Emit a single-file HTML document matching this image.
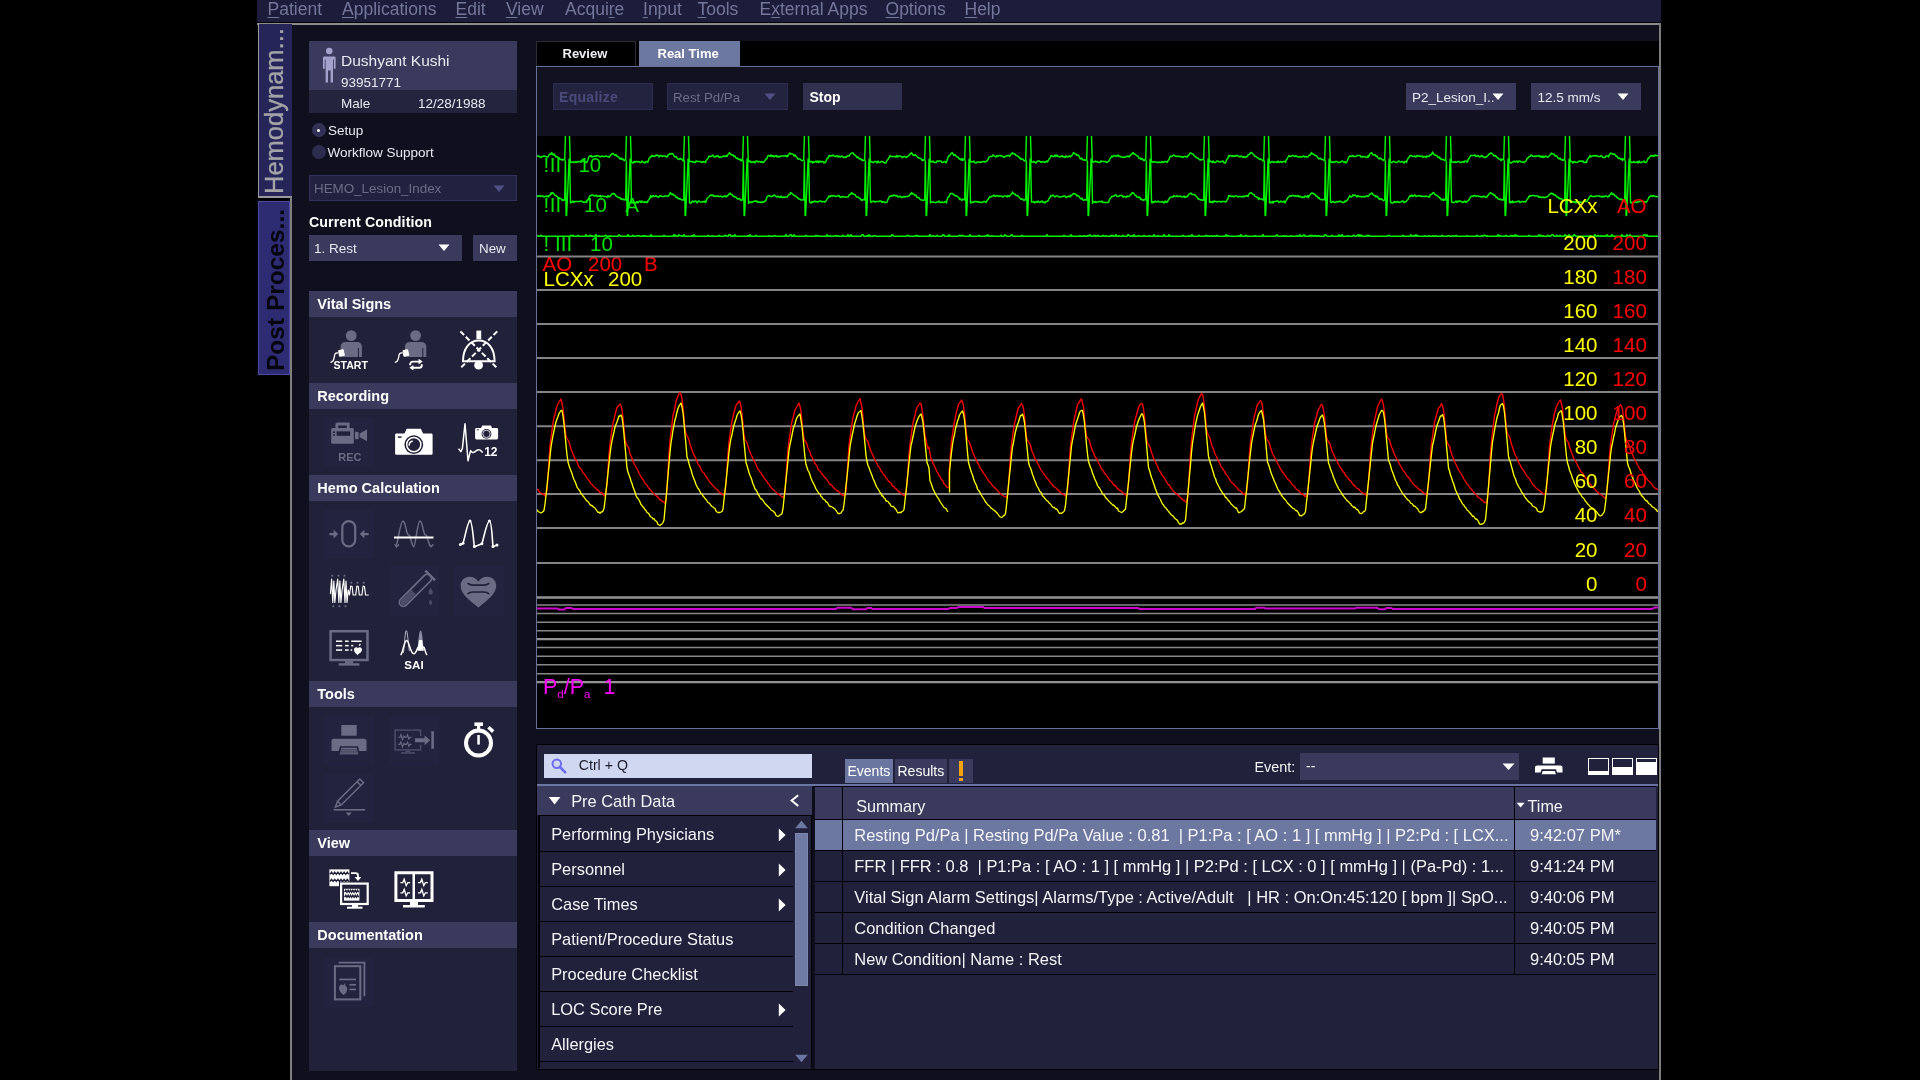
<!DOCTYPE html>
<html lang="en"><head><meta charset="utf-8"><title>Hemodynamic Monitor</title>
<style>
html,body{margin:0;padding:0;background:#000;}
body{width:1920px;height:1080px;overflow:hidden;position:relative;font-family:"Liberation Sans",Arial,sans-serif;}
#app{position:absolute;left:0;top:0;width:1920px;height:1080px;overflow:hidden;background:#000;will-change:transform;}
#app div,#app span,#app svg{position:absolute;display:block;}
#app span{white-space:pre;}
#app span u{text-decoration:underline;text-decoration-thickness:1.2px;text-underline-offset:1.5px;}
.vt{transform-origin:0 0;transform:rotate(-90deg);font-weight:bold;line-height:24px;height:24px;}
svg{overflow:visible;}
svg.wave{overflow:hidden;}

</style></head>
<body>
<div id="app">
<div style="left:257px;top:0px;width:1404px;height:22px;background:#1d1d3b"></div>
<span class="menu" style="left:267.5px;top:0.16px;font-size:17.5px;line-height:19.55px;color:#72779b"><u>P</u>atient</span>
<span class="menu" style="left:342px;top:0.16px;font-size:17.5px;line-height:19.55px;color:#72779b"><u>A</u>pplications</span>
<span class="menu" style="left:455.5px;top:0.16px;font-size:17.5px;line-height:19.55px;color:#72779b"><u>E</u>dit</span>
<span class="menu" style="left:506px;top:0.16px;font-size:17.5px;line-height:19.55px;color:#72779b"><u>V</u>iew</span>
<span class="menu" style="left:565px;top:0.16px;font-size:17.5px;line-height:19.55px;color:#72779b">Acqui<u>r</u>e</span>
<span class="menu" style="left:643px;top:0.16px;font-size:17.5px;line-height:19.55px;color:#72779b"><u>I</u>nput</span>
<span class="menu" style="left:697.5px;top:0.16px;font-size:17.5px;line-height:19.55px;color:#72779b"><u>T</u>ools</span>
<span class="menu" style="left:759.5px;top:0.16px;font-size:17.5px;line-height:19.55px;color:#72779b">E<u>x</u>ternal Apps</span>
<span class="menu" style="left:885.5px;top:0.16px;font-size:17.5px;line-height:19.55px;color:#72779b"><u>O</u>ptions</span>
<span class="menu" style="left:964.5px;top:0.16px;font-size:17.5px;line-height:19.55px;color:#72779b"><u>H</u>elp</span>
<div style="left:257px;top:23px;width:1404px;height:2px;background:#8c8c8c"></div>
<div style="left:1659px;top:23px;width:2px;height:1057px;background:#7c7c7c"></div>
<div style="left:292px;top:25px;width:1367px;height:1055px;background:#0f0f1e"></div>
<div style="left:258px;top:24px;width:34px;height:174px;background:#25255a;border-left:1.5px solid #9a9a9a;border-bottom:2px solid #9a9a9a;box-sizing:border-box"></div>
<span class="vt" style="left:262.4px;top:194.3px;font-size:25.5px;font-weight:normal;-webkit-text-stroke:.35px #a4a4a8;color:#a4a4a8">Hemodynam...</span>
<div style="left:258px;top:201px;width:32px;height:174px;background:#2d2b72;border:1px solid #4a48a0;box-sizing:border-box"></div>
<span class="vt" style="left:263.6px;top:370.5px;font-size:24.5px;color:#05050c">Post Proces...</span>
<div style="left:290px;top:197px;width:2px;height:883px;background:#808080"></div>
<div style="left:308.5px;top:40.7px;width:208.5px;height:49.3px;background:#3a3a5c"></div>
<div style="left:308.5px;top:90px;width:208.5px;height:23px;background:#24243e"></div>
<svg style="left:321px;top:46px" width="18" height="40" viewBox="0 0 18 40"><circle cx="8.3" cy="5" r="3.3" fill="#a2a2cc"/><path d="M3.2 10.6h10.2a1.2 1.2 0 0 1 1.2 1.2v11h-1.8v-9.4h-.8V36.5h-2.4V24.5H7V36.5H4.6V13.4h-.8v9.4H2v-11a1.2 1.2 0 0 1 1.2-1.2z" fill="#a2a2cc"/></svg>
<span style="left:341px;top:51.97px;font-size:15.5px;line-height:17.31px;color:#e8e8f0">Dushyant Kushi</span>
<span style="left:341px;top:74.58px;font-size:13.5px;line-height:15.08px;color:#e8e8f0">93951771</span>
<span style="left:341px;top:96.48px;font-size:13.5px;line-height:15.08px;color:#e8e8f0">Male</span>
<span style="left:418px;top:96.48px;font-size:13.5px;line-height:15.08px;color:#e8e8f0">12/28/1988</span>
<div style="left:311.5px;top:123px;width:14px;height:14px;border-radius:50%;background:#323256"></div>
<div style="left:317px;top:128.5px;width:3px;height:3px;border-radius:50%;background:#fff"></div>
<span style="left:328px;top:122.78px;font-size:13.5px;line-height:15.08px;color:#e8e8f0">Setup</span>
<div style="left:311.5px;top:145px;width:14px;height:14px;border-radius:50%;background:#2c2c4e"></div>
<span style="left:327.5px;top:144.78px;font-size:13.5px;line-height:15.08px;color:#e8e8f0">Workflow Support</span>
<div style="left:308.5px;top:174.5px;width:208.5px;height:26px;background:#222240;border:1px solid #30305a;box-sizing:border-box"></div>
<span style="left:314px;top:179px;font-size:13.4px;line-height:19px;color:#6c6c86">HEMO_Lesion_Index</span>
<svg style="left:493px;top:184.5px" width="12" height="8"><path d="M0.5 0.5h11l-5.5 6.5z" fill="#505084"/></svg>
<span style="left:309px;top:212px;font-size:14.2px;line-height:20px;color:#fff;font-weight:bold;letter-spacing:.1px">Current Condition</span>
<div style="left:308.5px;top:235px;width:153.5px;height:26px;background:#3a3a5c"></div>
<span style="left:314px;top:239px;font-size:13.5px;line-height:19px;color:#e8e8f0">1. Rest</span>
<svg style="left:438px;top:244px" width="12" height="8"><path d="M0.5 0.5h11l-5.5 6.5z" fill="#fff"/></svg>
<div style="left:473px;top:235px;width:44px;height:26px;background:#3a3a5c"></div>
<span style="left:479px;top:239px;font-size:13.4px;line-height:19px;color:#e8e8f0">New</span>
<div style="left:308.5px;top:291px;width:208.5px;height:26px;background:#3a3a5c"></div>
<div style="left:308.5px;top:317px;width:208.5px;height:66px;background:#212139"></div>
<span style="left:317.3px;top:295.88px;font-size:14.5px;line-height:16.20px;color:#fff;font-weight:bold">Vital Signs</span>
<div style="left:308.5px;top:383px;width:208.5px;height:26px;background:#3a3a5c"></div>
<div style="left:308.5px;top:409px;width:208.5px;height:66px;background:#212139"></div>
<span style="left:317.3px;top:387.88px;font-size:14.5px;line-height:16.20px;color:#fff;font-weight:bold">Recording</span>
<div style="left:308.5px;top:475px;width:208.5px;height:26px;background:#3a3a5c"></div>
<div style="left:308.5px;top:501px;width:208.5px;height:180px;background:#212139"></div>
<span style="left:317.3px;top:479.88px;font-size:14.5px;line-height:16.20px;color:#fff;font-weight:bold">Hemo Calculation</span>
<div style="left:308.5px;top:681px;width:208.5px;height:26px;background:#3a3a5c"></div>
<div style="left:308.5px;top:707px;width:208.5px;height:123px;background:#212139"></div>
<span style="left:317.3px;top:685.88px;font-size:14.5px;line-height:16.20px;color:#fff;font-weight:bold">Tools</span>
<div style="left:308.5px;top:830px;width:208.5px;height:26px;background:#3a3a5c"></div>
<div style="left:308.5px;top:856px;width:208.5px;height:66px;background:#212139"></div>
<span style="left:317.3px;top:834.88px;font-size:14.5px;line-height:16.20px;color:#fff;font-weight:bold">View</span>
<div style="left:308.5px;top:922px;width:208.5px;height:26px;background:#3a3a5c"></div>
<div style="left:308.5px;top:948px;width:208.5px;height:123px;background:#212139"></div>
<span style="left:317.3px;top:926.88px;font-size:14.5px;line-height:16.20px;color:#fff;font-weight:bold">Documentation</span>
<svg style="left:324px;top:325px" width="50" height="50" viewBox="0 0 50 50"><circle cx="27.2" cy="10.6" r="5.4" fill="#6b6b83"/><path d="M16.6 32V21.5a4.6 4.6 0 0 1 4.6-4.6h12.1a4.6 4.6 0 0 1 4.6 4.6V32h-3v-9h-1v9z" fill="#6b6b83"/><path d="M14.6 25.6l4.6-.9 1.2 5.6-4.9 1z" fill="#ffffff" stroke="#ffffff" stroke-width="1" stroke-linejoin="round"/><path d="M14.2 28c-3.4-.6-3.6 1.6-4 4.4-.4 2.6-1.6 4.8-3.8 5" fill="none" stroke="#ffffff" stroke-width="1.3"/><text x="9.4" y="43.8" font-family="Liberation Sans, Arial, sans-serif" font-weight="bold" font-size="10.6" fill="#ffffff">START</text></svg>
<svg style="left:389px;top:325px" width="50" height="50" viewBox="0 0 50 50"><circle cx="26.6" cy="10.6" r="5.4" fill="#6b6b83"/><path d="M16 32V21.5a4.6 4.6 0 0 1 4.6-4.6h12.1a4.6 4.6 0 0 1 4.6 4.6V32h-3v-9h-1v9z" fill="#6b6b83"/><path d="M14 25.6l4.6-.9 1.2 5.6-4.9 1z" fill="#ffffff" stroke="#ffffff" stroke-width="1" stroke-linejoin="round"/><path d="M13.6 28c-3.4-.6-3.6 1.6-4 4.4-.4 2.6-1.6 4.8-3.8 5" fill="none" stroke="#ffffff" stroke-width="1.3"/><g fill="none" stroke="#ffffff" stroke-width="1.9"><path d="M21.2 40.2v-1a2.6 2.6 0 0 1 2.6-2.6h6.4"/><path d="M32.8 39.2v1a2.6 2.6 0 0 1-2.6 2.6h-6.4"/></g><path d="M29.6 33.8l4 2.8-4 2.8zM24.4 40l-4 2.8 4 2.8z" fill="#ffffff"/></svg>
<svg style="left:454px;top:325px" width="50" height="50" viewBox="0 0 50 50"><rect x="22.4" y="5.6" width="4.8" height="8.6" fill="#ffffff"/><path d="M9 36.2C9 23 16 15.4 24.8 15.4S40.6 23 40.6 36.2z" fill="none" stroke="#ffffff" stroke-width="2"/><circle cx="24.6" cy="40.2" r="4.4" fill="#ffffff"/><g stroke="#ffffff" stroke-width="2" stroke-dasharray="5.2 2.4"><path d="M6.4 6.4L43 43"/><path d="M43.2 6.4L6.6 43"/></g></svg>
<div style="left:324px;top:417px;width:50px;height:50px;background:#232340"></div>
<svg style="left:324px;top:417px" width="50" height="50" viewBox="0 0 50 50"><path d="M11.4 11V7.6a2 2 0 0 1 2-2h12.2v5.6h-2.8V8.4h-8.6V11z" fill="#6b6b83"/><rect x="7.2" y="11" width="22.6" height="15.8" rx="1.4" fill="#6b6b83"/><rect x="12.6" y="14.4" width="13.6" height="4.4" fill="#212139"/><rect x="9" y="14.4" width="2" height="1.6" fill="#212139"/><rect x="9" y="17.2" width="2" height="1.6" fill="#212139"/><rect x="31" y="14.8" width="3.6" height="7.4" fill="#6b6b83"/><path d="M35.6 16.6l7.4-4.2v11.8l-7.4-4.2z" fill="#6b6b83"/><text x="14.3" y="44" font-family="Liberation Sans, Arial, sans-serif" font-weight="bold" font-size="11" fill="#6b6b83">REC</text></svg>
<svg style="left:389px;top:417px" width="50" height="50" viewBox="0 0 50 50"><path d="M7.4 16.5h8.1l2.2 -4.8h14.2l2.2 4.8h8.1a1.4 1.4 0 0 1 1.4 1.4v18.5a1.4 1.4 0 0 1-1.4 1.4h-34.7a1.4 1.4 0 0 1-1.4-1.4v-18.5a1.4 1.4 0 0 1 1.4-1.4z" fill="#ffffff"/><circle cx="24.8" cy="27.6" r="9.4" fill="#212139"/><circle cx="24.8" cy="27.6" r="7.1" fill="none" stroke="#ffffff" stroke-width="1.5"/><path d="M20.1 28.7a4.7 4.7 0 0 1 3.6 -4.7" fill="none" stroke="#ffffff" stroke-width="1.4"/><rect x="8.8" y="19.3" width="3.8" height="1.5" fill="#212139"/></svg>
<svg style="left:454px;top:417px" width="50" height="50" viewBox="0 0 50 50"><path d="M4.6 31.6l2.2 3 1.6-3.2L11 6.8l3 37 2.6-10.2c1.2 2 2.6 2.6 4.4 1 1.6-1.4 3.2-2.8 5.2-1.4 1 .7 1.6 1.4 2.4 2.4" fill="none" stroke="#ffffff" stroke-width="1.5" stroke-linejoin="round"/><path d="M22.4 11.0h4.7l1.1 -2.4h8.7l1.1 2.4h4.7a1.4 1.4 0 0 1 1.4 1.4v8.6a1.4 1.4 0 0 1-1.4 1.4h-20.2a1.4 1.4 0 0 1-1.4-1.4v-8.6a1.4 1.4 0 0 1 1.4-1.4z" fill="#ffffff"/><circle cx="32.5" cy="16.9" r="4.9" fill="#212139"/><circle cx="32.5" cy="16.9" r="3.7" fill="none" stroke="#ffffff" stroke-width="0.8"/><rect x="22.7" y="12.5" width="2.3" height="0.8" fill="#212139"/><text x="30.2" y="38.6" font-family="Liberation Sans, Arial, sans-serif" font-weight="bold" font-size="12" fill="#ffffff">12</text></svg>
<div style="left:324px;top:509px;width:50px;height:50px;background:#232340"></div>
<svg style="left:324px;top:509px" width="50" height="50" viewBox="0 0 50 50"><rect x="18.3" y="12.1" width="12.9" height="25.3" rx="6.45" fill="none" stroke="#6b6b83" stroke-width="2.2"/><path d="M5.4 23.9h4.2v-3.2l4.6 4.4-4.6 4.4v-3.2H5.4z" fill="#6b6b83"/><path d="M44.6 23.9h-4.2v-3.2l-4.6 4.4 4.6 4.4v-3.2h4.2z" fill="#6b6b83"/></svg>
<svg style="left:389px;top:509px" width="50" height="50" viewBox="0 0 50 50"><path d="M7.4 36.6C9.4 30 11.4 12 14 12s2.8 11 5 13.6l1.4.6c1.6 3.6 2.8 11.6 4.4 11.6S28.400 12 31 12s2.800 11 5 13.600l1.400.6c1.600 3.600 3 11.400 4.600 11.400" fill="none" stroke="#6b6b83" stroke-width="1.5"/><path d="M5.6 35.4l2 2.600 2.400-2.400M39.800 35.400l2.400 2.400 2-2.600" fill="none" stroke="#6b6b83" stroke-width="1.4"/><rect x="5" y="27.5" width="39.500" height="2" fill="#ffffff"/></svg>
<svg style="left:454px;top:509px" width="50" height="50" viewBox="0 0 50 50"><path d="M6 35.600l3-1.400C11.200 28 13.600 12 16 12s3.200 18 4.400 25.800l7.500-3.100C30 28 33 12 35.400 12s2.800 18 3.600 25.800l4-1.800" fill="none" stroke="#ffffff" stroke-width="1.6" stroke-linejoin="round"/><circle cx="6.4" cy="35.4" r="1.5" fill="#ffffff"/><circle cx="9.0" cy="34.2" r="1.5" fill="#ffffff"/><circle cx="16.0" cy="12.0" r="1.5" fill="#ffffff"/><circle cx="20.4" cy="37.6" r="1.5" fill="#ffffff"/><circle cx="27.9" cy="34.7" r="1.5" fill="#ffffff"/><circle cx="35.4" cy="12.0" r="1.5" fill="#ffffff"/><circle cx="39.0" cy="37.6" r="1.5" fill="#ffffff"/><circle cx="43.0" cy="36.0" r="1.5" fill="#ffffff"/></svg>
<svg style="left:324px;top:566px" width="50" height="50" viewBox="0 0 50 50"><path d="M6.4 28L7.6 13L8.8 36.500L9.8 15L10.8 36.500L12.0 24L13.7 13L14.9 36.500L15.9 15L16.9 36.500L18.1 24L19.8 13L21.0 36.500L22.0 15L23.0 36.500L24.2 24L25.5 29L26.7 20L28.1 20.500L29.1 29L31.7 29L32.9 20L34.3 20.500L35.3 29L37.9 29L39.1 20L40.5 20.500L41.5 29L44.7 29" fill="none" stroke="#ffffff" stroke-width="1.15" stroke-linejoin="round"/><rect x="7.4" y="8.8" width="1.800" height="1.800" fill="#6b6b83"/><rect x="13.5" y="8.8" width="1.800" height="1.800" fill="#6b6b83"/><rect x="19.6" y="8.8" width="1.800" height="1.800" fill="#6b6b83"/><rect x="26.4" y="15.8" width="1.800" height="1.800" fill="#6b6b83"/><rect x="32.6" y="15.8" width="1.800" height="1.800" fill="#6b6b83"/><rect x="38.8" y="15.8" width="1.800" height="1.800" fill="#6b6b83"/><rect x="8.4" y="39.4" width="1.800" height="1.800" fill="#6b6b83"/><rect x="14.5" y="39.4" width="1.800" height="1.800" fill="#6b6b83"/><rect x="20.6" y="39.4" width="1.800" height="1.800" fill="#6b6b83"/></svg>
<div style="left:389px;top:566px;width:50px;height:50px;background:#232340"></div>
<svg style="left:389px;top:566px" width="50" height="50" viewBox="0 0 50 50"><g transform="rotate(45 25 25)"><rect x="21.400" y="2.500" width="8.200" height="42" rx="4.100" fill="none" stroke="#6b6b83" stroke-width="1.700"/><path d="M22.300 26h6.400v14a3.200 3.200 0 0 1-6.400 0z" fill="#4c4c68"/><rect x="18.600" y="1.400" width="13.800" height="2.400" fill="#6b6b83"/></g><path d="M41.600 21.800c1.400 2.200 2.200 3.400 2.200 4.600a2.200 2.200 0 0 1-4.400 0c0-1.200.8-2.400 2.200-4.600z" fill="#4c4c68"/><path d="M41.600 33.600c1 1.600 1.600 2.500 1.600 3.400a1.600 1.600 0 0 1-3.200 0c0-.9.6-1.800 1.600-3.400z" fill="#4c4c68"/></svg>
<div style="left:454px;top:566px;width:50px;height:50px;background:#232340"></div>
<svg style="left:454px;top:566px" width="50" height="50" viewBox="0 0 50 50"><path d="M24.400 41.400C14 33.600 6.600 27.400 6.600 19.800c0-5.200 4-9 9-9 3.600 0 6.800 1.800 8.800 4.800 2-3 5.200-4.800 8.800-4.800 5 0 9 3.800 9 9 0 7.600-7.400 13.800-17.800 21.600z" fill="#6b6b83"/><path d="M13.600 17.200c1.600 1.600 3 2 5.400 2h10.800c2.400 0 3.800-.4 5.400-2M13.600 28c1.600-1.600 3-2 5.400-2h10.800c2.400 0 3.800.4 5.400 2" fill="none" stroke="#212139" stroke-width="1.700"/></svg>
<svg style="left:324px;top:623px" width="50" height="50" viewBox="0 0 50 50"><rect x="6.600" y="8.200" width="36.900" height="28.800" fill="none" stroke="#6b6b83" stroke-width="2.500"/><rect x="21" y="38.200" width="8" height="2.400" fill="#6b6b83"/><rect x="14.700" y="40.200" width="20.700" height="2.400" fill="#6b6b83"/><rect x="12.0" y="17.5" width="6.2" height="1.500" fill="#ffffff"/><rect x="21.0" y="17.5" width="3.6" height="1.500" fill="#ffffff"/><rect x="27.2" y="17.5" width="10.4" height="1.500" fill="#ffffff"/><rect x="12.0" y="21.9" width="6.2" height="1.500" fill="#ffffff"/><rect x="21.0" y="21.9" width="3.6" height="1.500" fill="#ffffff"/><rect x="27.2" y="21.9" width="2.0" height="1.500" fill="#ffffff"/><rect x="12.0" y="26.3" width="6.2" height="1.500" fill="#ffffff"/><rect x="21.0" y="26.3" width="3.6" height="1.500" fill="#ffffff"/><rect x="26.6" y="26.3" width="1.6" height="1.500" fill="#ffffff"/><path d="M34 32.400c-2.200-1.600-4-3.400-4-5.800 0-1.400 1-2.400 2.200-2.400.8 0 1.400.4 1.800 1 .4-.6 1-1 1.800-1 1.200 0 2.200 1 2.200 2.400 0 2-1.600 3.400-4.200 5z" fill="#ffffff"/><path d="M35.200 22.600l1.200-1.800" stroke="#ffffff" stroke-width="1.200"/></svg>
<svg style="left:389px;top:623px" width="50" height="50" viewBox="0 0 50 50"><path d="M14.400 30C15.600 22 16 7.600 17.300 7.600S19 20 20.400 28" fill="none" stroke="#b8b8c8" stroke-width="1"/><path d="M28.200 28C29.400 20 29.800 7.400 31.600 7.400S33.800 20 35 28z" fill="#8a8aa4"/><path d="M28.400 27.500c.8-4.500 1.200-7.500 1.600-10.500h3.200c.4 3 .8 6 1.600 10.500z" fill="#ffffff"/><path d="M11.600 32c2.600-2 3.400-14.600 6-14.600s3.600 13.400 7.200 13.400c2.600 0 3.200-6 4.200-6.400l5.800-.200c1 .6 1.400 5.800 3.200 7.800" fill="none" stroke="#ffffff" stroke-width="1.500"/><text x="15.300" y="45.500" font-family="Liberation Sans, Arial, sans-serif" font-weight="bold" font-size="11.600" fill="#ffffff">SAI</text></svg>
<div style="left:324px;top:716px;width:50px;height:50px;background:#232340"></div>
<svg style="left:324px;top:716px" width="50" height="50" viewBox="0 0 50 50"><rect x="17.3" y="9.0" width="15.4" height="10.7" fill="#6b6b83"/><path d="M7.5 35.0v-10.2a2 2 0 0 1 2-2h31.0a2 2 0 0 1 2 2v10.2z" fill="#6b6b83"/><path d="M16.6 31.0h16.8l2.1 8.6h-21.0z" fill="#6b6b83" stroke="#232340" stroke-width="1.600"/><rect x="15.5" y="33.5" width="19.0" height=".700" fill="#232340"/><rect x="15.5" y="35.6" width="19.0" height=".700" fill="#232340"/><rect x="15.5" y="37.8" width="19.0" height=".700" fill="#232340"/></svg>
<div style="left:389px;top:716px;width:50px;height:50px;background:#232340"></div>
<svg style="left:389px;top:716px" width="50" height="50" viewBox="0 0 50 50"><rect x="6.100" y="14.100" width="25.500" height="19.800" fill="none" stroke="#4c4c68" stroke-width="1.500"/><rect x="16.500" y="34.600" width="4.600" height="1.800" fill="#4c4c68"/><rect x="12" y="36.200" width="14" height="1.500" fill="#4c4c68"/><path d="M9.400 21.200l1.500 0 1-2.600 1.600 5 1.400-3.600 1 1.200 1.600 0 1-2.400 1.400 4.200 1.200-1.800 1.400 0M9.400 28.400l1.500 0 1-2.600 1.600 5 1.400-3.600 1 1.200 1.600 0 1-2.400 1.400 4.200 1.200-1.800 1.400 0" fill="none" stroke="#6b6b83" stroke-width="1.100"/><rect x="24.500" y="20" width="8" height="8.600" fill="#232340"/><path d="M26 22.200h9.600v-3l5.600 5-5.600 5v-3H26z" fill="#6b6b83"/><rect x="42.300" y="15.200" width="2.600" height="17.600" fill="#6b6b83"/></svg>
<svg style="left:454px;top:716px" width="50" height="50" viewBox="0 0 50 50"><circle cx="24.500" cy="27" r="12.500" fill="none" stroke="#ffffff" stroke-width="4"/><rect x="20.400" y="6.400" width="8.600" height="3.600" fill="#ffffff"/><rect x="23" y="9.500" width="3.200" height="4" fill="#ffffff"/><rect x="33.600" y="11.600" width="6.400" height="3.600" transform="rotate(42 36.800 13.400)" fill="#ffffff"/><rect x="23.300" y="19" width="2.500" height="9.600" fill="#ffffff"/></svg>
<div style="left:324px;top:773px;width:50px;height:50px;background:#232340"></div>
<svg style="left:324px;top:773px" width="50" height="50" viewBox="0 0 50 50"><g transform="rotate(45 25 20.500)" fill="none" stroke="#6b6b83" stroke-width="1.500"><path d="M22.400 2.600h5.200v31.500l-2.600 5.600-2.600-5.600z"/><path d="M22.400 6.400h5.200M22.400 34.100h5.200"/></g><rect x="9.700" y="36" width="31.400" height="1.600" fill="#6b6b83"/><path d="M21.800 39.600h6l-3 3.400z" fill="#6b6b83"/></svg>
<svg style="left:324px;top:863px" width="50" height="50" viewBox="0 0 50 50"><rect x="5.4" y="6.4" width="20.0" height="16.8" fill="#ffffff"/><path d="M6.0 11.4l1.57 -2.2l1.57 2.2l1.57 -2.2l1.57 2.2l1.57 -2.2l1.57 2.2l1.57 -2.2l1.57 2.2l1.57 -2.2l1.57 2.2l1.57 -2.2l1.57 2.2" fill="none" stroke="#212139" stroke-width="1.300"/><path d="M6.0 18.5l1.57 -2.2l1.57 2.2l1.57 -2.2l1.57 2.2l1.57 -2.2l1.57 2.2l1.57 -2.2l1.57 2.2l1.57 -2.2l1.57 2.2l1.57 -2.2l1.57 2.2" fill="none" stroke="#212139" stroke-width="1.300"/><path d="M27 10.200h4.600a2.400 2.400 0 0 1 2.400 2.400v2.600" fill="none" stroke="#ffffff" stroke-width="1.800"/><path d="M30.600 14l3.400 4 3.400-4z" fill="#ffffff"/><rect x="15" y="18.500" width="30.800" height="24.600" fill="#212139"/><rect x="17.100" y="20.600" width="26.600" height="20.400" fill="none" stroke="#ffffff" stroke-width="2.200"/><rect x="20.0" y="25.8" width="15.4" height="11.8" fill="#ffffff"/><path d="M20.6 29.3l1.18 -2.2l1.18 2.2l1.18 -2.2l1.18 2.2l1.18 -2.2l1.18 2.2l1.18 -2.2l1.18 2.2l1.18 -2.2l1.18 2.2l1.18 -2.2l1.18 2.2" fill="none" stroke="#212139" stroke-width="1.300"/><path d="M20.6 34.3l1.18 -2.2l1.18 2.2l1.18 -2.2l1.18 2.2l1.18 -2.2l1.18 2.2l1.18 -2.2l1.18 2.2l1.18 -2.2l1.18 2.2l1.18 -2.2l1.18 2.2" fill="none" stroke="#212139" stroke-width="1.300"/><rect x="28" y="42" width="6" height="2.200" fill="#ffffff"/><rect x="23" y="43.700" width="15.500" height="2" fill="#ffffff"/></svg>
<svg style="left:389px;top:863px" width="50" height="50" viewBox="0 0 50 50"><rect x="6.900" y="9.750" width="36.100" height="27.750" fill="none" stroke="#ffffff" stroke-width="3"/><rect x="23.500" y="9.750" width="2.500" height="27.750" fill="#ffffff"/><rect x="21" y="39" width="8" height="3.400" fill="#ffffff"/><rect x="14" y="42" width="21.800" height="2.500" fill="#ffffff"/><path d="M11.400 19.600l2.400 0 1.400-3.400 2 6.400 1.600-3 2.400 0M29 19.600l2.400 0 1.400-3.400 2 6.400 1.600-3 2.400 0M11.400 29.800l2.400 0 1.400-3.400 2 6.400 1.600-3 2.400 0M29 29.800l2.400 0 1.400-3.400 2 6.400 1.600-3 2.400 0" fill="none" stroke="#ffffff" stroke-width="1.300"/></svg>
<div style="left:324px;top:957px;width:50px;height:50px;background:#232340"></div>
<svg style="left:324px;top:957px" width="50" height="50" viewBox="0 0 50 50"><path d="M14.700 5.700h25.700v33.600" fill="none" stroke="#6b6b83" stroke-width="1.800"/><rect x="9.800" y="8.100" width="27.600" height="35.400" fill="#232340"/><rect x="10.900" y="9.200" width="25.400" height="33.200" fill="none" stroke="#6b6b83" stroke-width="2"/><rect x="15.400" y="21.600" width="16.600" height="1.700" fill="#6b6b83"/><rect x="25.400" y="26.900" width="6.600" height="1.700" fill="#6b6b83"/><rect x="25.400" y="31.600" width="6.600" height="1.700" fill="#6b6b83"/><path d="M19.600 38c-2.600-1.800-4.600-4-4.600-7 0-2 1.200-3.600 3-3.600.8 0 1.400.2 1.800.8l1.200-2 .8.600-.8 2c1.400.4 2.200 1.800 2.200 3.400 0 2.600-1.600 4.400-3.600 5.800z" fill="#6b6b83"/></svg>
<div style="left:536px;top:40.5px;width:1123px;height:26px;background:#000"></div>
<div style="left:536px;top:41px;width:100px;height:25.5px;background:#000;border:1px solid #2c2c34;border-bottom:none;box-sizing:border-box"></div>
<span style="left:562.5px;top:46.84px;font-size:13px;line-height:14.52px;color:#f0f0f4;font-weight:bold">Review</span>
<div style="left:639px;top:40.7px;width:100.5px;height:25.8px;background:#6c789f"></div>
<span style="left:657.5px;top:46.84px;font-size:13px;line-height:14.52px;color:#fff;font-weight:bold">Real Time</span>
<div style="left:535.5px;top:66px;width:1123.5px;height:663px;background:#11111f"></div>
<div style="left:553px;top:83px;width:99.5px;height:27px;background:#23233f;border:1px solid #2c2c52;box-sizing:border-box"></div>
<span style="left:559px;top:90.13px;font-size:14px;line-height:15.64px;color:#4a4a7c;font-weight:bold;letter-spacing:.3px">Equalize</span>
<div style="left:667px;top:83px;width:121px;height:27px;background:#23233f;border:1px solid #2c2c52;box-sizing:border-box"></div>
<span style="left:673px;top:90.61px;font-size:13.25px;line-height:14.80px;color:#6c6c8a">Rest Pd/Pa</span>
<svg style="left:764px;top:93px" width="12" height="8"><path d="M0.5 0.5h11l-5.5 6.5z" fill="#505084"/></svg>
<div style="left:803px;top:83px;width:99px;height:27px;background:#30304f"></div>
<span style="left:809.5px;top:90.13px;font-size:14px;line-height:15.64px;color:#fff;font-weight:bold">Stop</span>
<div style="left:1406px;top:83px;width:110px;height:27px;background:#3a3a5c"></div>
<span style="left:1412px;top:89.78px;font-size:13.5px;line-height:15.08px;color:#e8e8f0">P2_Lesion_I..</span>
<svg style="left:1492px;top:93px" width="12" height="8"><path d="M0.5 0.5h11l-5.5 6.5z" fill="#fff"/></svg>
<div style="left:1531px;top:83px;width:110px;height:27px;background:#3a3a5c"></div>
<span style="left:1537.5px;top:89.78px;font-size:13.5px;line-height:15.08px;color:#e8e8f0">12.5 mm/s</span>
<svg style="left:1617px;top:93px" width="12" height="8"><path d="M0.5 0.5h11l-5.5 6.5z" fill="#fff"/></svg>
<svg class="wave" style="left:537px;top:136px" width="1122" height="592" viewBox="537 136 1122 592">
<rect x="537" y="136" width="1122" height="592" fill="#000"/>
<g font-family="Liberation Sans, Arial, sans-serif" font-size="20.5">
<g fill="#00e400">
<text x="543.5" y="172">!</text><text x="549.8" y="172">II</text><text x="578.4" y="172">10</text>
<text x="543.5" y="211.5">!</text><text x="549.8" y="211.5">II</text><text x="584" y="211.5">10</text><text x="625.2" y="211.5">A</text>
<text x="543.5" y="250.5">!</text><text x="555" y="250.5">III</text><text x="590" y="250.5">10</text>
</g>
<g fill="#ff0000"><text x="542.5" y="271.3">AO</text><text x="588" y="271.3">200</text><text x="644" y="271.3">B</text></g>
<g fill="#ffff00"><text x="543.5" y="285.5">LCXx</text><text x="608" y="285.5">200</text></g>
</g>
<g stroke="#848484" stroke-width="2">
<line x1="537" x2="1659" y1="256.4" y2="256.4"/>
<line x1="537" x2="1659" y1="290.1" y2="290.1"/>
<line x1="537" x2="1659" y1="324.0" y2="324.0"/>
<line x1="537" x2="1659" y1="358.1" y2="358.1"/>
<line x1="537" x2="1659" y1="392.1" y2="392.1"/>
<line x1="537" x2="1659" y1="426.3" y2="426.3"/>
<line x1="537" x2="1659" y1="460.2" y2="460.2"/>
<line x1="537" x2="1659" y1="493.9" y2="493.9"/>
<line x1="537" x2="1659" y1="528.0" y2="528.0"/>
<line x1="537" x2="1659" y1="563.0" y2="563.0"/>
</g>
<g stroke="#878787" stroke-width="1.5">
<line x1="537" x2="1659" y1="597.5" y2="597.5" stroke="#939393" stroke-width="2.3"/>
<line x1="537" x2="1659" y1="604.9" y2="604.9"/>
<line x1="537" x2="1659" y1="613.4" y2="613.4"/>
<line x1="537" x2="1659" y1="622.2" y2="622.2"/>
<line x1="537" x2="1659" y1="630.7" y2="630.7"/>
<line x1="537" x2="1659" y1="639.2" y2="639.2" stroke="#939393" stroke-width="2.3"/>
<line x1="537" x2="1659" y1="647.6" y2="647.6"/>
<line x1="537" x2="1659" y1="656.2" y2="656.2"/>
<line x1="537" x2="1659" y1="664.8" y2="664.8"/>
<line x1="537" x2="1659" y1="673.7" y2="673.7"/>
<line x1="537" x2="1659" y1="682.1" y2="682.1" stroke="#939393" stroke-width="2.3"/>
</g>
<g fill="none" stroke="#00f200" stroke-width="1.45" stroke-linejoin="round">
<path d="M537.0 155.5L538.0 156.5L539.0 156.0L540.0 157.0L541.0 157.5L542.0 156.5L543.0 156.5L544.0 156.0L545.0 156.5L546.0 156.5L547.0 157.0L548.0 157.0L548.5 156.0L549.0 155.0L550.0 154.0L551.0 154.5L551.5 152.5L552.0 153.0L553.0 155.0L554.0 154.0L555.0 155.5L556.0 157.0L557.0 156.5L558.0 157.5L559.0 159.0L559.5 158.0L560.0 159.0L561.0 159.5L562.0 160.0L562.5 159.5L563.0 159.5L564.0 160.0L564.7 160.0L565.0 150.0L565.7 127.0L566.0 127.0L567.0 127.0L568.0 127.0L569.0 127.0L569.2 127.0L570.0 152.5L570.3 162.0L571.0 162.5L572.0 162.0L573.0 162.0L573.5 162.5L574.0 162.0L575.0 162.5L576.0 161.5L577.0 162.5L578.0 161.5L579.0 161.5L580.0 162.0L581.0 162.0L582.0 161.5L583.0 161.0L584.0 161.0L585.0 162.5L586.0 162.0L586.5 162.5L587.0 162.0L588.0 159.5L589.0 156.5L589.7 156.0L590.0 156.5L591.0 155.5L592.0 157.0L593.0 156.5L594.0 156.5L595.0 156.0L596.0 156.5L597.0 155.5L598.0 156.0L599.0 156.0L600.0 157.0L601.0 156.5L602.0 156.0L603.0 156.5L604.0 156.5L605.0 156.5L606.0 156.0L607.0 156.5L608.0 156.5L609.0 157.0L609.5 157.0L610.0 156.0L611.0 154.5L612.0 154.0L612.5 153.5L613.0 153.5L614.0 154.5L615.0 155.5L616.0 154.5L617.0 156.5L618.0 156.5L619.0 157.5L620.0 159.0L620.5 159.0L621.0 158.0L622.0 159.5L623.0 159.0L623.5 159.5L624.0 160.5L625.0 160.0L625.7 160.0L626.0 150.0L626.7 127.0L627.0 127.0L628.0 127.0L629.0 127.0L630.0 127.0L630.2 127.0L631.0 152.5L631.3 162.0L632.0 162.5L633.0 163.0L634.0 161.5L634.5 161.5L635.0 162.5L636.0 161.5L637.0 161.5L638.0 162.0L639.0 161.5L640.0 162.5L641.0 162.5L642.0 161.0L643.0 162.0L644.0 162.5L645.0 163.0L646.0 161.5L647.0 161.5L647.5 162.5L648.0 162.0L649.0 158.5L650.0 157.5L650.7 156.5L651.0 157.0L652.0 155.5L653.0 156.0L654.0 156.5L655.0 156.0L656.0 155.5L657.0 155.0L658.0 155.5L659.0 157.0L660.0 155.5L661.0 155.5L662.0 156.5L663.0 156.0L664.0 156.0L665.0 156.0L666.0 156.5L667.0 157.0L667.5 156.5L668.0 155.0L669.0 154.5L670.0 153.5L670.5 154.0L671.0 154.0L672.0 153.5L673.0 154.0L674.0 156.0L675.0 157.0L676.0 156.5L677.0 158.0L678.0 159.0L678.5 159.0L679.0 159.5L680.0 158.5L681.0 159.0L681.5 159.5L682.0 159.0L683.0 161.0L683.7 160.0L684.0 150.0L684.7 127.0L685.0 127.0L686.0 127.0L687.0 127.0L688.0 127.0L688.2 127.0L689.0 152.5L689.3 162.0L690.0 161.5L691.0 161.5L692.0 161.5L692.5 162.0L693.0 161.5L694.0 162.5L695.0 162.5L696.0 161.0L697.0 161.5L698.0 161.5L699.0 161.5L700.0 161.5L701.0 162.0L702.0 162.5L703.0 161.5L704.0 162.0L705.0 162.0L705.5 162.5L706.0 160.5L707.0 159.5L708.0 158.5L708.7 156.5L709.0 156.0L710.0 156.5L711.0 156.5L712.0 156.0L713.0 155.0L714.0 157.0L715.0 157.0L716.0 156.0L717.0 156.5L718.0 155.5L719.0 157.5L720.0 157.0L721.0 157.0L722.0 157.0L723.0 156.0L724.0 156.5L725.0 156.0L726.0 156.5L726.5 155.5L727.0 156.5L728.0 154.5L729.0 153.5L729.5 152.5L730.0 153.5L731.0 154.5L732.0 155.0L733.0 155.0L734.0 156.5L735.0 156.0L736.0 158.0L737.0 158.5L737.5 158.0L738.0 159.0L739.0 159.5L740.0 159.0L740.5 160.5L741.0 159.5L742.0 161.0L742.7 160.0L743.0 150.0L743.7 127.0L744.0 127.0L745.0 127.0L746.0 127.0L747.0 127.0L747.2 127.0L748.0 152.5L748.3 162.0L749.0 161.5L750.0 161.0L751.0 162.5L751.5 162.0L752.0 162.5L753.0 162.0L754.0 161.5L755.0 163.0L756.0 161.0L757.0 161.0L758.0 162.0L759.0 161.5L760.0 161.5L761.0 162.5L762.0 161.5L763.0 162.5L764.0 162.0L764.5 161.5L765.0 160.5L766.0 159.0L767.0 158.5L767.7 156.0L768.0 155.5L769.0 155.5L770.0 156.5L771.0 155.0L772.0 156.5L773.0 155.5L774.0 157.0L775.0 156.0L776.0 155.5L777.0 157.0L778.0 156.0L779.0 157.0L780.0 156.5L781.0 156.0L782.0 156.0L783.0 156.0L784.0 156.0L785.0 156.0L786.0 155.5L787.0 157.0L787.5 155.5L788.0 156.0L789.0 154.0L790.0 153.0L790.5 153.5L791.0 154.0L792.0 154.0L793.0 154.0L794.0 156.0L795.0 155.0L796.0 156.5L797.0 157.5L798.0 159.0L798.5 159.0L799.0 159.0L800.0 159.0L801.0 160.0L801.5 160.5L802.0 160.5L803.0 160.5L803.7 160.0L804.0 150.0L804.7 127.0L805.0 127.0L806.0 127.0L807.0 127.0L808.0 127.0L808.2 127.0L809.0 152.5L809.3 162.0L810.0 162.0L811.0 161.5L812.0 161.5L812.5 163.0L813.0 161.5L814.0 162.5L815.0 162.0L816.0 161.0L817.0 162.5L818.0 161.0L819.0 162.5L820.0 161.0L821.0 162.0L822.0 161.5L823.0 161.5L824.0 163.0L825.0 162.0L825.5 162.5L826.0 161.5L827.0 158.5L828.0 158.0L828.7 157.0L829.0 155.5L830.0 156.0L831.0 155.5L832.0 156.0L833.0 155.0L834.0 156.0L835.0 156.5L836.0 156.5L837.0 155.5L838.0 157.0L839.0 156.0L840.0 157.0L841.0 156.5L842.0 156.0L843.0 157.0L844.0 157.5L845.0 157.0L846.0 157.5L847.0 156.0L848.0 156.0L848.5 156.0L849.0 156.0L850.0 154.5L851.0 153.5L851.5 153.0L852.0 153.0L853.0 153.0L854.0 154.5L855.0 155.0L856.0 156.0L857.0 157.5L858.0 157.0L859.0 158.5L859.5 159.0L860.0 158.5L861.0 159.0L862.0 160.5L862.5 159.5L863.0 160.5L864.0 160.5L864.7 160.0L865.0 150.0L865.7 127.0L866.0 127.0L867.0 127.0L868.0 127.0L869.0 127.0L869.2 127.0L870.0 152.5L870.3 162.0L871.0 161.5L872.0 162.0L873.0 162.5L873.5 162.5L874.0 162.0L875.0 161.5L876.0 161.5L877.0 163.0L878.0 161.0L879.0 162.5L880.0 162.5L881.0 161.5L882.0 161.5L883.0 162.0L884.0 162.5L885.0 163.0L886.0 163.0L886.5 161.5L887.0 160.5L888.0 159.5L889.0 157.5L889.7 156.5L890.0 155.5L891.0 156.5L892.0 156.5L893.0 156.5L894.0 156.5L895.0 156.5L896.0 157.0L897.0 155.5L898.0 157.0L899.0 156.0L900.0 156.0L901.0 156.5L902.0 157.5L903.0 157.0L904.0 156.5L905.0 156.5L906.0 157.5L907.0 157.0L908.0 156.0L908.5 156.0L909.0 155.5L910.0 154.0L911.0 153.5L911.5 152.5L912.0 153.5L913.0 155.0L914.0 155.5L915.0 154.5L916.0 155.5L917.0 156.5L918.0 157.5L919.0 158.0L919.5 158.0L920.0 158.5L921.0 158.5L922.0 160.5L922.5 160.0L923.0 159.5L924.0 160.5L924.7 160.0L925.0 150.0L925.7 127.0L926.0 127.0L927.0 127.0L928.0 127.0L929.0 127.0L929.2 127.0L930.0 152.5L930.3 162.0L931.0 161.5L932.0 162.0L933.0 161.0L933.5 161.5L934.0 162.5L935.0 162.5L936.0 162.5L937.0 161.0L938.0 161.5L939.0 161.0L940.0 161.0L941.0 161.0L942.0 162.5L943.0 162.5L944.0 161.5L945.0 161.5L946.0 163.0L946.5 162.0L947.0 160.5L948.0 157.5L948.5 156.0L949.0 156.0L950.0 155.0L951.0 153.5L951.5 153.5L952.0 152.5L953.0 154.0L954.0 155.5L955.0 154.5L956.0 156.0L957.0 157.0L958.0 157.0L959.0 159.0L959.5 158.5L960.0 159.0L961.0 160.0L962.0 158.5L962.5 160.5L963.0 159.0L964.0 160.0L964.7 160.0L965.0 150.0L965.7 127.0L966.0 127.0L967.0 127.0L968.0 127.0L969.0 127.0L969.2 127.0L970.0 152.5L970.3 162.0L971.0 162.0L972.0 161.5L973.0 162.0L973.5 161.5L974.0 161.0L975.0 163.0L976.0 163.0L977.0 162.0L978.0 162.0L979.0 162.0L980.0 162.5L981.0 162.0L982.0 162.0L983.0 161.5L984.0 161.5L985.0 162.0L986.0 161.5L986.5 161.0L987.0 161.0L988.0 159.5L989.0 157.0L989.7 157.0L990.0 156.5L991.0 156.5L992.0 156.5L993.0 155.0L994.0 155.5L995.0 156.5L996.0 157.0L997.0 155.5L998.0 156.5L999.0 155.5L1000.0 155.5L1001.0 156.0L1002.0 156.0L1003.0 156.5L1004.0 157.5L1005.0 156.5L1006.0 156.0L1007.0 156.0L1008.0 155.5L1009.0 155.5L1009.5 156.5L1010.0 156.0L1011.0 154.0L1012.0 153.5L1012.5 152.5L1013.0 153.5L1014.0 154.0L1015.0 154.0L1016.0 155.5L1017.0 155.5L1018.0 156.5L1019.0 157.0L1020.0 158.5L1020.5 158.0L1021.0 159.5L1022.0 159.0L1023.0 159.0L1023.5 160.0L1024.0 160.5L1025.0 161.0L1025.7 160.0L1026.0 150.0L1026.7 127.0L1027.0 127.0L1028.0 127.0L1029.0 127.0L1030.0 127.0L1030.2 127.0L1031.0 152.5L1031.3 162.0L1032.0 162.0L1033.0 162.0L1034.0 161.5L1034.5 161.5L1035.0 162.5L1036.0 163.0L1037.0 161.5L1038.0 161.0L1039.0 161.0L1040.0 161.5L1041.0 162.5L1042.0 161.5L1043.0 162.0L1044.0 162.0L1045.0 162.5L1046.0 161.5L1047.0 161.0L1047.5 162.0L1048.0 161.0L1049.0 159.0L1050.0 158.0L1050.7 156.5L1051.0 155.5L1052.0 156.0L1053.0 156.5L1054.0 156.5L1055.0 155.0L1056.0 156.5L1057.0 155.0L1058.0 156.5L1059.0 156.5L1060.0 157.0L1061.0 156.5L1062.0 155.5L1063.0 157.0L1064.0 156.5L1065.0 157.5L1066.0 156.0L1067.0 156.5L1068.0 157.0L1069.0 156.0L1070.0 156.5L1070.5 157.0L1071.0 156.0L1072.0 155.5L1073.0 153.5L1073.5 152.5L1074.0 153.0L1075.0 154.0L1076.0 154.0L1077.0 155.5L1078.0 155.0L1079.0 156.0L1080.0 158.5L1081.0 159.0L1081.5 158.0L1082.0 158.5L1083.0 160.0L1084.0 160.0L1084.5 159.5L1085.0 160.0L1086.0 160.5L1086.7 160.0L1087.0 150.0L1087.7 127.0L1088.0 127.0L1089.0 127.0L1090.0 127.0L1091.0 127.0L1091.2 127.0L1092.0 152.5L1092.3 162.0L1093.0 162.5L1094.0 161.5L1095.0 161.5L1095.5 161.0L1096.0 162.0L1097.0 161.5L1098.0 162.0L1099.0 162.5L1100.0 162.5L1101.0 161.0L1102.0 161.5L1103.0 161.5L1104.0 161.5L1105.0 161.5L1106.0 162.0L1107.0 162.5L1108.0 161.5L1108.5 161.5L1109.0 161.0L1110.0 158.5L1111.0 157.5L1111.7 156.0L1112.0 157.0L1113.0 156.5L1114.0 155.5L1115.0 155.5L1116.0 156.5L1117.0 156.0L1118.0 155.0L1119.0 156.5L1120.0 156.0L1121.0 157.0L1122.0 157.0L1123.0 157.5L1124.0 157.0L1125.0 157.5L1126.0 156.5L1127.0 156.5L1128.0 156.0L1129.0 157.0L1129.5 156.0L1130.0 156.0L1131.0 154.5L1132.0 154.0L1132.5 153.0L1133.0 152.5L1134.0 154.0L1135.0 154.0L1136.0 155.0L1137.0 156.0L1138.0 156.0L1139.0 158.5L1140.0 158.5L1140.5 158.0L1141.0 159.5L1142.0 158.5L1143.0 159.5L1143.5 160.5L1144.0 159.5L1145.0 160.5L1145.7 160.0L1146.0 150.0L1146.7 127.0L1147.0 127.0L1148.0 127.0L1149.0 127.0L1150.0 127.0L1150.2 127.0L1151.0 152.5L1151.3 162.0L1152.0 161.5L1153.0 162.5L1154.0 161.5L1154.5 162.0L1155.0 162.0L1156.0 162.0L1157.0 162.5L1158.0 162.5L1159.0 162.0L1160.0 162.5L1161.0 162.5L1162.0 161.5L1163.0 162.5L1164.0 162.0L1165.0 161.5L1166.0 161.5L1167.0 162.5L1167.5 162.0L1168.0 160.5L1169.0 159.5L1170.0 156.5L1170.7 156.0L1171.0 156.5L1172.0 156.5L1173.0 155.5L1174.0 155.0L1175.0 156.0L1176.0 156.5L1177.0 156.5L1178.0 156.0L1179.0 156.5L1180.0 156.5L1181.0 157.0L1182.0 156.5L1183.0 157.5L1184.0 156.5L1185.0 156.5L1186.0 156.5L1187.0 157.0L1187.5 157.0L1188.0 155.5L1189.0 155.0L1190.0 153.0L1190.5 153.0L1191.0 153.0L1192.0 154.0L1193.0 154.0L1194.0 155.5L1195.0 156.5L1196.0 157.0L1197.0 158.0L1198.0 158.0L1198.5 159.0L1199.0 159.0L1200.0 160.0L1201.0 159.5L1201.5 160.0L1202.0 159.5L1203.0 159.5L1203.7 160.0L1204.0 150.0L1204.7 127.0L1205.0 127.0L1206.0 127.0L1207.0 127.0L1208.0 127.0L1208.2 127.0L1209.0 152.5L1209.3 162.0L1210.0 161.0L1211.0 161.5L1212.0 162.0L1212.5 162.5L1213.0 161.0L1214.0 162.5L1215.0 162.5L1216.0 162.0L1217.0 161.0L1218.0 161.0L1219.0 162.0L1220.0 162.0L1221.0 161.5L1222.0 161.5L1223.0 161.0L1224.0 163.0L1225.0 162.5L1225.5 163.0L1226.0 161.5L1227.0 159.0L1228.0 158.0L1228.7 155.5L1229.0 156.5L1230.0 155.5L1231.0 155.5L1232.0 156.5L1233.0 155.5L1234.0 156.5L1235.0 156.0L1236.0 155.5L1237.0 156.0L1238.0 155.5L1239.0 156.5L1240.0 157.0L1241.0 156.0L1242.0 156.5L1243.0 157.5L1244.0 156.5L1245.0 157.5L1246.0 157.0L1247.0 156.5L1247.5 156.5L1248.0 155.0L1249.0 154.5L1250.0 154.0L1250.5 152.5L1251.0 152.5L1252.0 153.0L1253.0 154.0L1254.0 155.0L1255.0 156.5L1256.0 156.5L1257.0 157.5L1258.0 158.0L1258.5 158.0L1259.0 159.0L1260.0 159.5L1261.0 159.0L1261.5 159.5L1262.0 160.0L1263.0 161.0L1263.7 160.0L1264.0 150.0L1264.7 127.0L1265.0 127.0L1266.0 127.0L1267.0 127.0L1268.0 127.0L1268.2 127.0L1269.0 152.5L1269.3 162.0L1270.0 163.0L1271.0 162.0L1272.0 161.5L1272.5 161.5L1273.0 162.0L1274.0 162.5L1275.0 162.0L1276.0 162.0L1277.0 162.5L1278.0 161.0L1279.0 162.5L1280.0 162.0L1281.0 161.5L1282.0 162.5L1283.0 161.5L1284.0 161.5L1285.0 161.5L1285.5 162.5L1286.0 160.5L1287.0 159.0L1288.0 157.0L1288.7 156.5L1289.0 155.5L1290.0 156.5L1291.0 156.5L1292.0 155.5L1293.0 155.5L1294.0 156.0L1295.0 156.5L1296.0 155.5L1297.0 156.5L1298.0 157.0L1299.0 157.0L1300.0 156.5L1301.0 157.0L1302.0 157.0L1303.0 156.0L1304.0 156.5L1305.0 157.0L1306.0 156.5L1307.0 157.0L1308.0 157.0L1308.5 156.0L1309.0 155.5L1310.0 155.0L1311.0 153.5L1311.5 152.5L1312.0 154.0L1313.0 154.0L1314.0 154.5L1315.0 155.5L1316.0 155.5L1317.0 156.5L1318.0 158.0L1319.0 159.0L1319.5 158.5L1320.0 158.0L1321.0 159.0L1322.0 159.5L1322.5 159.5L1323.0 159.5L1324.0 160.5L1324.7 160.0L1325.0 150.0L1325.7 127.0L1326.0 127.0L1327.0 127.0L1328.0 127.0L1329.0 127.0L1329.2 127.0L1330.0 152.5L1330.3 162.0L1331.0 161.5L1332.0 162.5L1333.0 162.0L1333.5 162.0L1334.0 162.5L1335.0 162.0L1336.0 161.5L1337.0 161.5L1338.0 162.5L1339.0 162.5L1340.0 162.0L1341.0 162.0L1342.0 161.0L1343.0 161.5L1344.0 162.5L1345.0 161.5L1346.0 163.0L1346.5 162.5L1347.0 161.5L1348.0 159.0L1349.0 156.5L1349.7 156.0L1350.0 156.5L1351.0 156.0L1352.0 156.5L1353.0 155.5L1354.0 156.5L1355.0 156.5L1356.0 156.5L1357.0 155.5L1358.0 155.5L1359.0 155.5L1360.0 155.5L1361.0 157.0L1362.0 156.5L1363.0 157.0L1364.0 156.5L1365.0 156.5L1366.0 157.5L1367.0 157.5L1368.0 155.5L1368.5 157.0L1369.0 156.0L1370.0 153.5L1371.0 153.5L1371.5 152.5L1372.0 153.0L1373.0 155.0L1374.0 155.0L1375.0 154.5L1376.0 156.5L1377.0 156.0L1378.0 158.0L1379.0 158.5L1379.5 159.0L1380.0 158.0L1381.0 158.5L1382.0 159.5L1382.5 159.5L1383.0 160.5L1384.0 159.5L1384.7 160.0L1385.0 150.0L1385.7 127.0L1386.0 127.0L1387.0 127.0L1388.0 127.0L1389.0 127.0L1389.2 127.0L1390.0 152.5L1390.3 162.0L1391.0 162.5L1392.0 162.5L1393.0 161.5L1393.5 161.5L1394.0 161.5L1395.0 162.0L1396.0 162.5L1397.0 162.5L1398.0 161.5L1399.0 161.0L1400.0 162.0L1401.0 162.0L1402.0 161.5L1403.0 162.0L1404.0 163.0L1405.0 161.5L1406.0 161.5L1406.5 162.5L1407.0 160.5L1408.0 158.5L1409.0 157.0L1409.7 156.5L1410.0 155.5L1411.0 155.5L1412.0 156.0L1413.0 156.5L1414.0 156.5L1415.0 156.0L1416.0 157.0L1417.0 155.5L1418.0 156.0L1419.0 156.0L1420.0 156.5L1421.0 156.0L1422.0 156.0L1423.0 157.5L1424.0 156.5L1425.0 156.5L1426.0 157.5L1427.0 156.0L1428.0 156.5L1429.0 156.5L1429.5 155.5L1430.0 155.0L1431.0 155.0L1432.0 153.5L1432.5 152.0L1433.0 153.0L1434.0 154.5L1435.0 155.0L1436.0 155.5L1437.0 155.5L1438.0 157.5L1439.0 157.0L1440.0 158.5L1440.5 158.0L1441.0 159.5L1442.0 159.5L1443.0 159.5L1443.5 159.5L1444.0 160.0L1445.0 160.5L1445.7 160.0L1446.0 150.0L1446.7 127.0L1447.0 127.0L1448.0 127.0L1449.0 127.0L1450.0 127.0L1450.2 127.0L1451.0 152.5L1451.3 162.0L1452.0 162.0L1453.0 162.0L1454.0 162.5L1454.5 162.5L1455.0 161.5L1456.0 162.5L1457.0 162.0L1458.0 161.5L1459.0 161.5L1460.0 162.5L1461.0 162.5L1462.0 162.0L1463.0 161.5L1464.0 162.5L1465.0 161.0L1466.0 161.0L1467.0 162.0L1467.5 162.0L1468.0 160.0L1469.0 158.5L1470.0 156.5L1470.7 155.5L1471.0 155.5L1472.0 155.5L1473.0 155.5L1474.0 155.5L1475.0 155.0L1476.0 156.5L1477.0 156.0L1478.0 155.5L1479.0 156.5L1480.0 157.0L1481.0 156.0L1482.0 155.5L1483.0 157.0L1484.0 157.0L1485.0 157.5L1486.0 157.0L1487.0 156.5L1487.5 156.0L1488.0 155.5L1489.0 154.0L1490.0 154.0L1490.5 153.0L1491.0 153.0L1492.0 153.5L1493.0 154.5L1494.0 156.0L1495.0 155.5L1496.0 156.0L1497.0 157.5L1498.0 158.0L1498.5 159.0L1499.0 159.0L1500.0 159.0L1501.0 160.5L1501.5 160.5L1502.0 159.0L1503.0 159.5L1503.7 160.0L1504.0 150.0L1504.7 127.0L1505.0 127.0L1506.0 127.0L1507.0 127.0L1508.0 127.0L1508.2 127.0L1509.0 152.5L1509.3 162.0L1510.0 162.5L1511.0 163.0L1512.0 162.5L1512.5 162.0L1513.0 162.0L1514.0 161.0L1515.0 162.0L1516.0 161.5L1517.0 161.0L1518.0 162.5L1519.0 161.0L1520.0 161.0L1521.0 162.0L1522.0 162.0L1523.0 162.0L1524.0 162.5L1525.0 161.5L1525.5 161.5L1526.0 161.0L1527.0 158.5L1528.0 158.0L1528.7 157.0L1529.0 156.5L1530.0 156.5L1531.0 155.0L1532.0 155.5L1533.0 156.5L1534.0 156.5L1535.0 156.0L1536.0 156.5L1537.0 156.0L1538.0 156.0L1539.0 155.5L1540.0 157.0L1541.0 156.0L1542.0 157.5L1543.0 156.0L1544.0 157.5L1545.0 156.5L1546.0 156.0L1547.0 157.0L1548.0 157.0L1548.5 157.0L1549.0 156.0L1550.0 155.0L1551.0 154.0L1551.5 153.0L1552.0 154.0L1553.0 154.0L1554.0 154.0L1555.0 156.0L1556.0 155.5L1557.0 156.5L1558.0 158.0L1559.0 159.0L1559.5 158.5L1560.0 158.0L1561.0 159.5L1562.0 160.0L1562.5 160.0L1563.0 159.5L1564.0 160.5L1564.7 160.0L1565.0 150.0L1565.7 127.0L1566.0 127.0L1567.0 127.0L1568.0 127.0L1569.0 127.0L1569.2 127.0L1570.0 152.5L1570.3 162.0L1571.0 161.5L1572.0 161.5L1573.0 163.0L1573.5 162.5L1574.0 161.5L1575.0 162.0L1576.0 162.5L1577.0 162.5L1578.0 162.0L1579.0 161.0L1580.0 161.5L1581.0 161.0L1582.0 161.5L1583.0 161.0L1584.0 162.5L1585.0 162.5L1586.0 162.0L1586.5 162.5L1587.0 160.5L1588.0 158.5L1589.0 157.5L1589.7 156.5L1590.0 155.5L1591.0 157.0L1592.0 156.0L1593.0 156.0L1594.0 155.5L1595.0 156.0L1596.0 155.5L1597.0 156.0L1598.0 156.5L1599.0 156.5L1600.0 156.5L1601.0 155.5L1602.0 156.5L1603.0 157.5L1604.0 157.5L1605.0 157.5L1606.0 156.0L1607.0 156.0L1608.0 156.0L1608.5 157.0L1609.0 155.5L1610.0 154.0L1611.0 153.0L1611.5 153.5L1612.0 153.5L1613.0 154.5L1614.0 154.0L1615.0 154.5L1616.0 156.5L1617.0 156.0L1618.0 158.0L1619.0 158.5L1619.5 158.0L1620.0 158.5L1621.0 159.5L1622.0 158.5L1622.5 160.5L1623.0 159.0L1624.0 159.5L1624.7 160.0L1625.0 150.0L1625.7 127.0L1626.0 127.0L1627.0 127.0L1628.0 127.0L1629.0 127.0L1629.2 127.0L1630.0 152.5L1630.3 162.0L1631.0 162.0L1632.0 162.5L1633.0 162.5L1633.5 161.5L1634.0 162.0L1635.0 162.5L1636.0 162.5L1637.0 161.5L1638.0 163.0L1639.0 161.0L1640.0 162.5L1641.0 162.5L1642.0 162.0L1643.0 162.0L1644.0 161.0L1645.0 162.5L1646.0 162.5L1646.5 162.0L1647.0 161.0L1648.0 158.5L1649.0 158.0L1649.7 156.5L1650.0 156.5L1651.0 155.5L1652.0 156.0L1653.0 155.5L1654.0 156.5L1655.0 155.0L1656.0 155.5L1657.0 155.5L1658.0 156.0"/>
<path d="M537.0 197.0L538.0 195.5L539.0 196.5L540.0 195.5L541.0 196.5L542.0 196.0L543.0 196.0L544.0 197.0L545.0 196.5L546.0 196.0L547.0 196.5L548.0 196.0L548.5 197.0L549.0 195.5L550.0 195.5L551.0 193.0L551.5 194.0L552.0 192.5L553.0 193.0L554.0 194.0L555.0 195.5L556.0 195.5L557.0 196.5L558.0 198.0L559.0 197.5L559.5 198.5L560.0 198.5L561.0 198.5L562.0 200.5L562.5 199.5L563.0 199.5L564.0 200.5L564.7 200.0L565.0 183.5L565.4 161.0L566.0 207.5L566.1 215.5L566.6 215.5L567.0 206.5L567.8 189.0L568.0 184.5L569.0 161.5L569.1 159.0L569.7 163.0L570.0 178.0L570.5 203.0L571.0 202.5L572.0 202.0L573.0 201.0L573.5 202.5L574.0 202.0L575.0 201.5L576.0 201.5L577.0 201.5L578.0 201.5L579.0 201.5L580.0 201.5L581.0 201.0L582.0 201.5L583.0 202.0L584.0 202.5L585.0 202.0L586.0 202.0L586.5 202.5L587.0 201.5L588.0 199.5L589.0 197.5L589.7 196.5L590.0 195.5L591.0 195.5L592.0 195.0L593.0 195.0L594.0 196.0L595.0 196.0L596.0 195.0L597.0 196.5L598.0 196.0L599.0 196.5L600.0 195.5L601.0 197.0L602.0 196.0L603.0 196.0L604.0 196.5L605.0 196.5L606.0 196.5L607.0 197.5L608.0 195.5L609.0 197.0L609.5 196.5L610.0 196.5L611.0 195.0L612.0 194.0L612.5 193.5L613.0 194.0L614.0 193.5L615.0 194.5L616.0 196.0L617.0 196.5L618.0 197.5L619.0 197.5L620.0 197.5L620.5 199.0L621.0 198.5L622.0 199.5L623.0 199.0L623.5 199.5L624.0 200.0L625.0 199.5L625.7 200.0L626.0 183.5L626.4 161.0L627.0 207.5L627.1 215.5L627.6 215.5L628.0 206.5L628.8 189.0L629.0 184.5L630.0 161.5L630.1 159.0L630.7 163.0L631.0 178.0L631.5 203.0L632.0 202.0L633.0 203.0L634.0 202.5L634.5 202.5L635.0 202.5L636.0 203.0L637.0 201.5L638.0 203.0L639.0 201.5L640.0 201.0L641.0 202.5L642.0 201.0L643.0 202.0L644.0 202.5L645.0 201.5L646.0 202.5L647.0 202.0L647.5 202.5L648.0 200.5L649.0 199.5L650.0 198.0L650.7 195.5L651.0 197.0L652.0 197.0L653.0 195.5L654.0 196.5L655.0 196.5L656.0 195.5L657.0 196.5L658.0 197.0L659.0 197.0L660.0 195.5L661.0 196.0L662.0 196.5L663.0 196.5L664.0 196.5L665.0 196.0L666.0 196.0L667.0 196.0L667.5 196.5L668.0 196.0L669.0 195.5L670.0 193.0L670.5 192.5L671.0 194.0L672.0 194.5L673.0 194.0L674.0 195.5L675.0 195.5L676.0 197.5L677.0 197.0L678.0 198.5L678.5 198.5L679.0 199.0L680.0 198.5L681.0 199.5L681.5 199.5L682.0 200.0L683.0 200.0L683.7 200.0L684.0 183.5L684.4 161.0L685.0 207.5L685.1 215.5L685.6 215.5L686.0 206.5L686.8 189.0L687.0 184.5L688.0 161.5L688.1 159.0L688.7 163.0L689.0 178.0L689.5 203.0L690.0 203.0L691.0 203.0L692.0 201.5L692.5 201.0L693.0 201.5L694.0 202.0L695.0 201.0L696.0 201.0L697.0 203.0L698.0 201.5L699.0 201.0L700.0 202.0L701.0 202.0L702.0 202.0L703.0 201.5L704.0 202.0L705.0 201.0L705.5 202.5L706.0 202.0L707.0 198.5L708.0 197.5L708.7 197.0L709.0 196.5L710.0 195.5L711.0 195.0L712.0 195.5L713.0 195.0L714.0 196.5L715.0 196.0L716.0 196.0L717.0 196.5L718.0 196.0L719.0 196.5L720.0 196.5L721.0 196.0L722.0 197.0L723.0 197.0L724.0 196.0L725.0 196.5L726.0 196.0L726.5 197.0L727.0 196.0L728.0 195.5L729.0 194.0L729.5 193.5L730.0 193.0L731.0 194.5L732.0 194.5L733.0 196.0L734.0 196.5L735.0 197.0L736.0 197.0L737.0 198.5L737.5 199.0L738.0 199.0L739.0 198.5L740.0 199.0L740.5 200.0L741.0 200.5L742.0 199.5L742.7 200.0L743.0 183.5L743.4 161.0L744.0 207.5L744.1 215.5L744.6 215.5L745.0 206.5L745.8 189.0L746.0 184.5L747.0 161.5L747.1 159.0L747.7 163.0L748.0 178.0L748.5 203.5L749.0 202.5L750.0 202.0L751.0 202.5L751.5 202.0L752.0 202.5L753.0 201.5L754.0 201.5L755.0 201.0L756.0 201.5L757.0 201.0L758.0 202.5L759.0 202.0L760.0 202.0L761.0 202.5L762.0 202.0L763.0 202.5L764.0 201.5L764.5 201.5L765.0 201.5L766.0 200.0L767.0 197.0L767.7 196.0L768.0 196.0L769.0 195.5L770.0 196.0L771.0 196.5L772.0 196.5L773.0 196.0L774.0 195.0L775.0 195.5L776.0 196.5L777.0 197.0L778.0 196.0L779.0 197.0L780.0 197.5L781.0 196.0L782.0 197.5L783.0 197.0L784.0 197.5L785.0 197.0L786.0 197.0L787.0 197.0L787.5 197.0L788.0 195.5L789.0 194.5L790.0 194.5L790.5 192.5L791.0 193.0L792.0 193.5L793.0 194.5L794.0 195.5L795.0 195.5L796.0 196.5L797.0 197.5L798.0 198.0L798.5 199.0L799.0 199.0L800.0 199.0L801.0 200.0L801.5 200.0L802.0 200.0L803.0 199.5L803.7 200.0L804.0 183.5L804.4 161.0L805.0 207.5L805.1 215.5L805.6 215.5L806.0 206.5L806.8 189.0L807.0 184.5L808.0 161.5L808.1 159.0L808.7 163.0L809.0 178.0L809.5 201.5L810.0 202.5L811.0 203.0L812.0 201.5L812.5 202.5L813.0 202.0L814.0 201.5L815.0 201.0L816.0 202.0L817.0 201.5L818.0 202.0L819.0 201.5L820.0 201.0L821.0 201.0L822.0 202.0L823.0 201.5L824.0 201.5L825.0 202.0L825.5 201.5L826.0 201.0L827.0 199.0L828.0 198.0L828.7 196.0L829.0 196.0L830.0 197.0L831.0 195.5L832.0 196.0L833.0 196.0L834.0 195.5L835.0 196.5L836.0 196.5L837.0 196.0L838.0 196.0L839.0 195.5L840.0 197.0L841.0 197.5L842.0 196.5L843.0 196.5L844.0 197.0L845.0 197.0L846.0 197.0L847.0 197.0L848.0 197.0L848.5 196.5L849.0 195.0L850.0 194.5L851.0 194.0L851.5 192.5L852.0 193.0L853.0 194.0L854.0 194.5L855.0 194.5L856.0 196.5L857.0 197.0L858.0 197.0L859.0 198.0L859.5 198.0L860.0 198.5L861.0 200.0L862.0 199.5L862.5 200.5L863.0 199.5L864.0 199.5L864.7 200.0L865.0 183.5L865.4 161.0L866.0 207.5L866.1 215.5L866.6 215.5L867.0 206.5L867.8 189.0L868.0 184.5L869.0 161.5L869.1 159.0L869.7 163.0L870.0 178.0L870.5 201.5L871.0 202.5L872.0 201.5L873.0 201.5L873.5 201.0L874.0 201.5L875.0 202.0L876.0 201.5L877.0 201.5L878.0 201.5L879.0 201.5L880.0 201.0L881.0 201.0L882.0 202.5L883.0 201.5L884.0 202.0L885.0 202.5L886.0 202.5L886.5 202.5L887.0 202.0L888.0 199.5L889.0 197.0L889.7 196.5L890.0 196.0L891.0 196.5L892.0 195.5L893.0 196.0L894.0 195.0L895.0 195.5L896.0 196.0L897.0 195.5L898.0 197.0L899.0 197.0L900.0 196.0L901.0 197.0L902.0 197.5L903.0 197.0L904.0 196.5L905.0 197.0L906.0 196.5L907.0 196.5L908.0 196.5L908.5 196.0L909.0 196.0L910.0 194.5L911.0 193.5L911.5 192.5L912.0 194.0L913.0 193.5L914.0 194.5L915.0 195.5L916.0 195.0L917.0 197.5L918.0 197.5L919.0 197.5L919.5 199.0L920.0 199.0L921.0 200.0L922.0 200.0L922.5 200.0L923.0 200.5L924.0 200.0L924.7 200.0L925.0 183.5L925.4 161.0L926.0 207.5L926.1 215.5L926.6 215.5L927.0 206.5L927.8 189.0L928.0 184.5L929.0 161.5L929.1 159.0L929.7 163.0L930.0 178.0L930.5 203.0L931.0 202.0L932.0 202.0L933.0 202.0L933.5 202.0L934.0 202.5L935.0 202.5L936.0 202.5L937.0 202.0L938.0 202.0L939.0 201.0L940.0 202.5L941.0 202.5L942.0 202.0L943.0 202.5L944.0 202.5L945.0 201.5L946.0 202.0L946.5 203.0L947.0 200.0L948.0 197.0L948.5 197.0L949.0 196.5L950.0 194.0L951.0 193.5L951.5 193.5L952.0 193.5L953.0 194.0L954.0 195.0L955.0 195.5L956.0 196.0L957.0 196.0L958.0 197.0L959.0 198.0L959.5 199.5L960.0 198.5L961.0 199.5L962.0 200.5L962.5 199.0L963.0 199.5L964.0 199.5L964.7 200.0L965.0 183.5L965.4 161.0L966.0 207.5L966.1 215.5L966.6 215.5L967.0 206.5L967.8 189.0L968.0 184.5L969.0 161.5L969.1 159.0L969.7 163.0L970.0 178.0L970.5 203.0L971.0 203.0L972.0 202.0L973.0 202.0L973.5 202.5L974.0 202.0L975.0 201.5L976.0 201.5L977.0 202.0L978.0 201.5L979.0 202.5L980.0 202.0L981.0 202.5L982.0 202.5L983.0 202.0L984.0 201.5L985.0 201.5L986.0 202.5L986.5 202.0L987.0 200.5L988.0 199.5L989.0 198.0L989.7 196.5L990.0 197.0L991.0 197.0L992.0 196.0L993.0 196.0L994.0 195.0L995.0 196.5L996.0 196.0L997.0 195.5L998.0 196.0L999.0 196.5L1000.0 196.0L1001.0 196.0L1002.0 196.5L1003.0 197.0L1004.0 196.0L1005.0 196.0L1006.0 196.0L1007.0 197.0L1008.0 195.5L1009.0 196.5L1009.5 196.5L1010.0 195.5L1011.0 194.5L1012.0 193.5L1012.5 192.0L1013.0 193.0L1014.0 194.0L1015.0 194.0L1016.0 195.5L1017.0 195.5L1018.0 196.0L1019.0 197.0L1020.0 198.0L1020.5 199.0L1021.0 199.5L1022.0 199.0L1023.0 199.0L1023.5 200.0L1024.0 200.5L1025.0 199.5L1025.7 200.0L1026.0 183.5L1026.4 161.0L1027.0 207.5L1027.1 215.5L1027.6 215.5L1028.0 206.5L1028.8 189.0L1029.0 184.5L1030.0 161.5L1030.1 159.0L1030.7 163.0L1031.0 178.0L1031.5 202.0L1032.0 202.0L1033.0 202.0L1034.0 201.5L1034.5 203.0L1035.0 202.5L1036.0 201.5L1037.0 202.5L1038.0 201.0L1039.0 202.0L1040.0 202.5L1041.0 201.5L1042.0 201.0L1043.0 202.5L1044.0 202.0L1045.0 203.0L1046.0 201.5L1047.0 201.5L1047.5 201.0L1048.0 201.0L1049.0 198.5L1050.0 197.5L1050.7 195.5L1051.0 196.0L1052.0 196.0L1053.0 195.0L1054.0 196.0L1055.0 197.0L1056.0 196.0L1057.0 196.0L1058.0 196.0L1059.0 197.0L1060.0 197.0L1061.0 197.0L1062.0 196.5L1063.0 196.5L1064.0 196.0L1065.0 196.0L1066.0 197.5L1067.0 197.0L1068.0 196.5L1069.0 196.0L1070.0 197.0L1070.5 195.5L1071.0 196.0L1072.0 195.0L1073.0 194.0L1073.5 193.5L1074.0 193.5L1075.0 194.0L1076.0 194.5L1077.0 196.0L1078.0 195.5L1079.0 196.5L1080.0 198.0L1081.0 199.0L1081.5 199.0L1082.0 198.0L1083.0 200.0L1084.0 200.5L1084.5 199.5L1085.0 199.5L1086.0 200.0L1086.7 200.0L1087.0 183.5L1087.4 161.0L1088.0 207.5L1088.1 215.5L1088.6 215.5L1089.0 206.5L1089.8 189.0L1090.0 184.5L1091.0 161.5L1091.1 159.0L1091.7 163.0L1092.0 178.0L1092.5 203.5L1093.0 202.0L1094.0 201.5L1095.0 202.5L1095.5 201.5L1096.0 202.5L1097.0 202.0L1098.0 202.0L1099.0 201.5L1100.0 201.5L1101.0 202.0L1102.0 201.0L1103.0 202.5L1104.0 202.5L1105.0 202.5L1106.0 202.5L1107.0 202.5L1108.0 202.5L1108.5 202.5L1109.0 201.0L1110.0 198.5L1111.0 197.5L1111.7 196.5L1112.0 196.5L1113.0 196.5L1114.0 196.0L1115.0 195.0L1116.0 195.0L1117.0 196.5L1118.0 196.5L1119.0 196.0L1120.0 195.5L1121.0 195.5L1122.0 195.5L1123.0 197.0L1124.0 196.5L1125.0 196.5L1126.0 197.5L1127.0 196.0L1128.0 196.5L1129.0 196.5L1129.5 196.0L1130.0 195.0L1131.0 194.5L1132.0 193.0L1132.5 192.5L1133.0 193.0L1134.0 193.5L1135.0 195.5L1136.0 195.5L1137.0 197.0L1138.0 197.5L1139.0 197.0L1140.0 197.5L1140.5 199.5L1141.0 199.0L1142.0 199.5L1143.0 200.5L1143.5 199.5L1144.0 200.0L1145.0 199.5L1145.7 200.0L1146.0 183.5L1146.4 161.0L1147.0 207.5L1147.1 215.5L1147.6 215.5L1148.0 206.5L1148.8 189.0L1149.0 184.5L1150.0 161.5L1150.1 159.0L1150.7 163.0L1151.0 178.0L1151.5 202.0L1152.0 203.0L1153.0 201.5L1154.0 202.5L1154.5 202.0L1155.0 201.0L1156.0 202.0L1157.0 202.0L1158.0 201.0L1159.0 202.0L1160.0 202.0L1161.0 202.0L1162.0 201.5L1163.0 202.0L1164.0 203.0L1165.0 201.0L1166.0 202.5L1167.0 201.5L1167.5 202.0L1168.0 200.5L1169.0 199.0L1170.0 197.5L1170.7 197.0L1171.0 197.0L1172.0 197.0L1173.0 197.0L1174.0 195.5L1175.0 196.5L1176.0 196.5L1177.0 195.5L1178.0 196.5L1179.0 196.5L1180.0 196.0L1181.0 196.5L1182.0 197.0L1183.0 197.0L1184.0 196.0L1185.0 197.5L1186.0 196.5L1187.0 197.0L1187.5 196.0L1188.0 196.0L1189.0 194.0L1190.0 193.5L1190.5 193.5L1191.0 193.0L1192.0 194.5L1193.0 194.5L1194.0 194.5L1195.0 195.0L1196.0 196.0L1197.0 197.0L1198.0 199.0L1198.5 198.5L1199.0 199.5L1200.0 199.5L1201.0 200.0L1201.5 200.0L1202.0 199.5L1203.0 200.5L1203.7 200.0L1204.0 183.5L1204.4 161.0L1205.0 207.5L1205.1 215.5L1205.6 215.5L1206.0 206.5L1206.8 189.0L1207.0 184.5L1208.0 161.5L1208.1 159.0L1208.7 163.0L1209.0 178.0L1209.5 202.0L1210.0 202.5L1211.0 201.5L1212.0 202.5L1212.5 201.5L1213.0 202.5L1214.0 201.0L1215.0 201.5L1216.0 201.5L1217.0 202.0L1218.0 201.5L1219.0 201.5L1220.0 201.5L1221.0 202.0L1222.0 201.5L1223.0 201.5L1224.0 201.5L1225.0 201.5L1225.5 202.0L1226.0 202.0L1227.0 200.0L1228.0 198.5L1228.7 195.5L1229.0 196.5L1230.0 195.5L1231.0 196.5L1232.0 196.5L1233.0 196.0L1234.0 197.0L1235.0 196.0L1236.0 196.0L1237.0 196.0L1238.0 197.0L1239.0 196.5L1240.0 196.5L1241.0 196.5L1242.0 197.0L1243.0 196.0L1244.0 197.0L1245.0 196.0L1246.0 196.0L1247.0 195.5L1247.5 196.5L1248.0 196.5L1249.0 194.0L1250.0 193.0L1250.5 193.0L1251.0 192.5L1252.0 193.5L1253.0 194.5L1254.0 194.5L1255.0 196.5L1256.0 196.5L1257.0 197.5L1258.0 197.5L1258.5 199.5L1259.0 198.0L1260.0 199.0L1261.0 199.0L1261.5 199.0L1262.0 199.0L1263.0 200.0L1263.7 200.0L1264.0 183.5L1264.4 161.0L1265.0 207.5L1265.1 215.5L1265.6 215.5L1266.0 206.5L1266.8 189.0L1267.0 184.5L1268.0 161.5L1268.1 159.0L1268.7 163.0L1269.0 178.0L1269.5 202.5L1270.0 203.0L1271.0 202.0L1272.0 202.5L1272.5 201.5L1273.0 203.0L1274.0 201.5L1275.0 201.5L1276.0 201.5L1277.0 201.0L1278.0 201.0L1279.0 202.5L1280.0 202.0L1281.0 201.0L1282.0 202.0L1283.0 202.0L1284.0 201.0L1285.0 203.0L1285.5 201.5L1286.0 201.0L1287.0 199.0L1288.0 197.5L1288.7 197.0L1289.0 196.5L1290.0 195.5L1291.0 196.5L1292.0 195.5L1293.0 195.5L1294.0 196.0L1295.0 195.5L1296.0 196.5L1297.0 196.0L1298.0 195.5L1299.0 197.0L1300.0 196.0L1301.0 197.0L1302.0 197.5L1303.0 197.0L1304.0 197.5L1305.0 196.0L1306.0 196.5L1307.0 197.0L1308.0 195.5L1308.5 197.5L1309.0 196.0L1310.0 195.0L1311.0 193.5L1311.5 193.0L1312.0 193.0L1313.0 193.5L1314.0 194.0L1315.0 194.5L1316.0 196.0L1317.0 196.0L1318.0 198.0L1319.0 197.5L1319.5 198.5L1320.0 199.5L1321.0 199.5L1322.0 199.5L1322.5 200.0L1323.0 199.5L1324.0 199.5L1324.7 200.0L1325.0 183.5L1325.4 161.0L1326.0 207.5L1326.1 215.5L1326.6 215.5L1327.0 206.5L1327.8 189.0L1328.0 184.5L1329.0 161.5L1329.1 159.0L1329.7 163.0L1330.0 178.0L1330.5 202.0L1331.0 202.5L1332.0 202.0L1333.0 201.5L1333.5 201.5L1334.0 202.5L1335.0 202.5L1336.0 202.0L1337.0 201.5L1338.0 202.0L1339.0 201.5L1340.0 201.0L1341.0 202.0L1342.0 202.0L1343.0 202.5L1344.0 202.5L1345.0 201.0L1346.0 201.5L1346.5 201.0L1347.0 200.5L1348.0 199.0L1349.0 197.0L1349.7 195.5L1350.0 196.5L1351.0 197.0L1352.0 196.5L1353.0 195.0L1354.0 195.5L1355.0 195.0L1356.0 196.0L1357.0 197.0L1358.0 195.5L1359.0 196.5L1360.0 196.5L1361.0 196.5L1362.0 197.0L1363.0 196.5L1364.0 196.5L1365.0 197.0L1366.0 196.0L1367.0 196.0L1368.0 196.5L1368.5 196.0L1369.0 195.5L1370.0 194.0L1371.0 194.0L1371.5 193.0L1372.0 193.0L1373.0 194.5L1374.0 195.5L1375.0 195.5L1376.0 197.0L1377.0 196.0L1378.0 197.5L1379.0 199.0L1379.5 199.5L1380.0 198.5L1381.0 199.5L1382.0 199.0L1382.5 199.5L1383.0 200.5L1384.0 200.5L1384.7 200.0L1385.0 183.5L1385.4 161.0L1386.0 207.5L1386.1 215.5L1386.6 215.5L1387.0 206.5L1387.8 189.0L1388.0 184.5L1389.0 161.5L1389.1 159.0L1389.7 163.0L1390.0 178.0L1390.5 202.0L1391.0 202.5L1392.0 203.0L1393.0 203.0L1393.5 202.5L1394.0 201.5L1395.0 202.0L1396.0 202.5L1397.0 201.5L1398.0 202.0L1399.0 202.5L1400.0 202.0L1401.0 202.0L1402.0 201.0L1403.0 201.0L1404.0 202.5L1405.0 202.0L1406.0 201.5L1406.5 201.0L1407.0 200.5L1408.0 199.5L1409.0 197.0L1409.7 196.5L1410.0 195.5L1411.0 196.5L1412.0 195.0L1413.0 196.5L1414.0 195.5L1415.0 195.0L1416.0 196.5L1417.0 196.0L1418.0 196.0L1419.0 195.5L1420.0 196.0L1421.0 196.5L1422.0 196.0L1423.0 196.5L1424.0 196.5L1425.0 196.5L1426.0 196.0L1427.0 196.5L1428.0 196.5L1429.0 197.0L1429.5 197.0L1430.0 195.0L1431.0 194.5L1432.0 194.0L1432.5 193.5L1433.0 192.5L1434.0 193.0L1435.0 194.5L1436.0 195.0L1437.0 195.5L1438.0 196.5L1439.0 197.0L1440.0 198.5L1440.5 198.0L1441.0 199.5L1442.0 200.0L1443.0 199.0L1443.5 200.5L1444.0 199.0L1445.0 200.0L1445.7 200.0L1446.0 183.5L1446.4 161.0L1447.0 207.5L1447.1 215.5L1447.6 215.5L1448.0 206.5L1448.8 189.0L1449.0 184.5L1450.0 161.5L1450.1 159.0L1450.7 163.0L1451.0 178.0L1451.5 202.0L1452.0 202.0L1453.0 202.5L1454.0 202.5L1454.5 202.5L1455.0 202.0L1456.0 201.0L1457.0 202.5L1458.0 201.0L1459.0 201.5L1460.0 201.0L1461.0 201.5L1462.0 202.0L1463.0 202.5L1464.0 202.0L1465.0 201.0L1466.0 202.5L1467.0 201.5L1467.5 201.5L1468.0 200.5L1469.0 200.0L1470.0 197.5L1470.7 197.0L1471.0 196.5L1472.0 196.0L1473.0 196.5L1474.0 195.5L1475.0 195.5L1476.0 196.5L1477.0 196.0L1478.0 196.0L1479.0 196.5L1480.0 196.5L1481.0 197.0L1482.0 196.5L1483.0 197.0L1484.0 196.0L1485.0 197.0L1486.0 197.5L1487.0 197.0L1487.5 195.5L1488.0 195.5L1489.0 194.0L1490.0 193.0L1490.5 192.5L1491.0 193.0L1492.0 194.0L1493.0 194.0L1494.0 195.5L1495.0 195.0L1496.0 197.5L1497.0 197.0L1498.0 199.0L1498.5 199.0L1499.0 199.5L1500.0 199.0L1501.0 199.5L1501.5 200.0L1502.0 199.5L1503.0 200.0L1503.7 200.0L1504.0 183.5L1504.4 161.0L1505.0 207.5L1505.1 215.5L1505.6 215.5L1506.0 206.5L1506.8 189.0L1507.0 184.5L1508.0 161.5L1508.1 159.0L1508.7 163.0L1509.0 178.0L1509.5 202.0L1510.0 203.0L1511.0 201.5L1512.0 202.5L1512.5 201.0L1513.0 202.5L1514.0 202.0L1515.0 202.0L1516.0 202.0L1517.0 201.5L1518.0 201.5L1519.0 201.0L1520.0 202.5L1521.0 202.0L1522.0 201.5L1523.0 201.5L1524.0 202.0L1525.0 201.5L1525.5 202.0L1526.0 201.5L1527.0 199.5L1528.0 198.5L1528.7 196.5L1529.0 197.0L1530.0 195.5L1531.0 196.0L1532.0 195.5L1533.0 195.5L1534.0 195.5L1535.0 196.0L1536.0 196.0L1537.0 196.0L1538.0 196.0L1539.0 197.5L1540.0 196.5L1541.0 197.5L1542.0 197.5L1543.0 197.0L1544.0 197.5L1545.0 197.5L1546.0 197.0L1547.0 197.0L1548.0 196.0L1548.5 196.0L1549.0 195.0L1550.0 194.0L1551.0 193.5L1551.5 193.0L1552.0 194.0L1553.0 193.5L1554.0 195.0L1555.0 195.0L1556.0 195.5L1557.0 197.0L1558.0 197.0L1559.0 198.5L1559.5 198.0L1560.0 199.0L1561.0 198.5L1562.0 199.0L1562.5 200.0L1563.0 200.0L1564.0 200.5L1564.7 200.0L1565.0 183.5L1565.4 161.0L1566.0 207.5L1566.1 215.5L1566.6 215.5L1567.0 206.5L1567.8 189.0L1568.0 184.5L1569.0 161.5L1569.1 159.0L1569.7 163.0L1570.0 178.0L1570.5 202.5L1571.0 202.5L1572.0 202.0L1573.0 201.5L1573.5 201.5L1574.0 202.5L1575.0 201.5L1576.0 203.0L1577.0 201.5L1578.0 202.0L1579.0 202.0L1580.0 202.0L1581.0 202.5L1582.0 202.5L1583.0 202.5L1584.0 201.0L1585.0 201.0L1586.0 201.5L1586.5 201.5L1587.0 201.5L1588.0 199.5L1589.0 198.0L1589.7 196.5L1590.0 196.5L1591.0 195.5L1592.0 196.5L1593.0 196.5L1594.0 196.5L1595.0 196.5L1596.0 196.0L1597.0 196.0L1598.0 196.0L1599.0 196.0L1600.0 196.5L1601.0 196.5L1602.0 197.0L1603.0 196.0L1604.0 197.0L1605.0 196.0L1606.0 196.0L1607.0 196.5L1608.0 197.0L1608.5 196.0L1609.0 196.5L1610.0 194.5L1611.0 194.0L1611.5 192.5L1612.0 194.0L1613.0 194.5L1614.0 194.0L1615.0 196.0L1616.0 196.0L1617.0 197.5L1618.0 198.0L1619.0 199.0L1619.5 199.5L1620.0 199.0L1621.0 199.5L1622.0 199.0L1622.5 200.5L1623.0 200.5L1624.0 201.0L1624.7 200.0L1625.0 183.5L1625.4 161.0L1626.0 207.5L1626.1 215.5L1626.6 215.5L1627.0 206.5L1627.8 189.0L1628.0 184.5L1629.0 161.5L1629.1 159.0L1629.7 163.0L1630.0 178.0L1630.5 202.5L1631.0 203.0L1632.0 202.5L1633.0 202.5L1633.5 202.0L1634.0 202.5L1635.0 201.0L1636.0 202.5L1637.0 202.5L1638.0 201.5L1639.0 202.0L1640.0 201.0L1641.0 201.0L1642.0 201.5L1643.0 201.5L1644.0 202.0L1645.0 201.5L1646.0 202.5L1646.5 201.5L1647.0 201.5L1648.0 199.5L1649.0 197.0L1649.7 197.0L1650.0 196.5L1651.0 195.5L1652.0 196.5L1653.0 195.5L1654.0 196.0L1655.0 196.5L1656.0 196.5L1657.0 196.5L1658.0 197.0"/>
<path d="M537.0 236.3L538.0 235.8L539.0 236.3L540.0 236.3L541.0 235.3L542.0 236.3L543.0 236.3L544.0 236.3L545.0 236.3L546.0 236.3L547.0 236.3L548.0 236.3L549.0 236.3L550.0 236.3L551.0 236.3L552.0 236.3L553.0 236.3L554.0 236.3L555.0 236.3L556.0 236.3L557.0 236.3L558.0 236.3L559.0 236.3L560.0 236.3L561.0 236.3L562.0 236.3L563.0 236.3L564.0 236.3L565.0 236.3L566.0 236.3L567.0 236.3L568.0 236.3L569.0 236.3L570.0 236.3L571.0 235.3L572.0 236.3L573.0 235.3L574.0 236.3L575.0 236.3L576.0 236.3L577.0 236.3L578.0 235.3L579.0 236.3L580.0 236.3L581.0 236.3L582.0 236.3L583.0 236.3L584.0 236.3L585.0 236.3L586.0 234.8L587.0 236.3L588.0 236.3L589.0 236.3L590.0 235.3L591.0 236.3L592.0 235.8L593.0 236.3L594.0 236.3L595.0 236.3L596.0 234.8L597.0 236.3L598.0 236.3L599.0 235.8L600.0 236.3L601.0 236.3L602.0 236.3L603.0 236.3L604.0 236.3L605.0 235.8L606.0 235.3L607.0 236.3L608.0 236.3L609.0 236.3L610.0 235.8L611.0 236.3L612.0 236.3L613.0 236.3L614.0 236.3L615.0 236.3L616.0 236.3L617.0 236.3L618.0 236.3L619.0 234.8L620.0 235.8L621.0 236.3L622.0 236.3L623.0 236.3L624.0 236.3L625.0 236.3L626.0 236.3L627.0 236.3L628.0 234.8L629.0 236.3L630.0 236.3L631.0 236.3L632.0 236.3L633.0 235.3L634.0 236.3L635.0 236.3L636.0 236.3L637.0 235.8L638.0 235.8L639.0 235.8L640.0 236.3L641.0 236.3L642.0 236.3L643.0 235.8L644.0 236.3L645.0 235.8L646.0 236.3L647.0 236.3L648.0 236.3L649.0 236.3L650.0 236.3L651.0 234.8L652.0 236.3L653.0 236.3L654.0 236.3L655.0 236.3L656.0 236.3L657.0 236.3L658.0 236.3L659.0 236.3L660.0 236.3L661.0 236.3L662.0 236.3L663.0 236.3L664.0 235.3L665.0 236.3L666.0 236.3L667.0 236.3L668.0 236.3L669.0 236.3L670.0 236.3L671.0 236.3L672.0 236.3L673.0 236.3L674.0 234.8L675.0 236.3L676.0 235.3L677.0 236.3L678.0 236.3L679.0 234.8L680.0 235.8L681.0 235.8L682.0 236.3L683.0 236.3L684.0 234.8L685.0 236.3L686.0 236.3L687.0 236.3L688.0 236.3L689.0 236.3L690.0 236.3L691.0 236.3L692.0 235.8L693.0 236.3L694.0 234.8L695.0 236.3L696.0 236.3L697.0 236.3L698.0 236.3L699.0 236.3L700.0 236.3L701.0 236.3L702.0 236.3L703.0 236.3L704.0 236.3L705.0 236.3L706.0 236.3L707.0 236.3L708.0 235.3L709.0 236.3L710.0 236.3L711.0 236.3L712.0 235.8L713.0 236.3L714.0 236.3L715.0 236.3L716.0 236.3L717.0 236.3L718.0 236.3L719.0 235.3L720.0 236.3L721.0 236.3L722.0 236.3L723.0 236.3L724.0 236.3L725.0 235.3L726.0 235.8L727.0 236.3L728.0 236.3L729.0 234.8L730.0 234.8L731.0 236.3L732.0 236.3L733.0 235.8L734.0 236.3L735.0 234.8L736.0 236.3L737.0 236.3L738.0 236.3L739.0 236.3L740.0 236.3L741.0 236.3L742.0 236.3L743.0 236.3L744.0 236.3L745.0 236.3L746.0 236.3L747.0 236.3L748.0 235.8L749.0 236.3L750.0 234.8L751.0 236.3L752.0 236.3L753.0 236.3L754.0 236.3L755.0 236.3L756.0 235.3L757.0 236.3L758.0 236.3L759.0 236.3L760.0 236.3L761.0 236.3L762.0 236.3L763.0 236.3L764.0 236.3L765.0 236.3L766.0 236.3L767.0 236.3L768.0 236.3L769.0 235.8L770.0 236.3L771.0 236.3L772.0 236.3L773.0 236.3L774.0 235.8L775.0 235.8L776.0 236.3L777.0 236.3L778.0 236.3L779.0 236.3L780.0 236.3L781.0 236.3L782.0 236.3L783.0 236.3L784.0 236.3L785.0 236.3L786.0 234.8L787.0 236.3L788.0 236.3L789.0 236.3L790.0 235.3L791.0 234.8L792.0 236.3L793.0 236.3L794.0 234.8L795.0 236.3L796.0 236.3L797.0 236.3L798.0 236.3L799.0 236.3L800.0 236.3L801.0 236.3L802.0 236.3L803.0 236.3L804.0 236.3L805.0 236.3L806.0 235.3L807.0 236.3L808.0 236.3L809.0 236.3L810.0 236.3L811.0 236.3L812.0 236.3L813.0 236.3L814.0 236.3L815.0 236.3L816.0 235.3L817.0 236.3L818.0 235.8L819.0 236.3L820.0 236.3L821.0 236.3L822.0 236.3L823.0 236.3L824.0 236.3L825.0 236.3L826.0 236.3L827.0 234.8L828.0 236.3L829.0 236.3L830.0 235.8L831.0 236.3L832.0 236.3L833.0 236.3L834.0 236.3L835.0 235.8L836.0 235.8L837.0 236.3L838.0 235.8L839.0 236.3L840.0 236.3L841.0 236.3L842.0 236.3L843.0 235.3L844.0 236.3L845.0 236.3L846.0 236.3L847.0 236.3L848.0 234.8L849.0 236.3L850.0 236.3L851.0 234.8L852.0 236.3L853.0 236.3L854.0 236.3L855.0 236.3L856.0 236.3L857.0 236.3L858.0 236.3L859.0 236.3L860.0 236.3L861.0 236.3L862.0 234.8L863.0 234.8L864.0 236.3L865.0 236.3L866.0 236.3L867.0 235.8L868.0 236.3L869.0 234.8L870.0 236.3L871.0 236.3L872.0 236.3L873.0 236.3L874.0 235.8L875.0 235.8L876.0 236.3L877.0 236.3L878.0 236.3L879.0 236.3L880.0 236.3L881.0 236.3L882.0 236.3L883.0 236.3L884.0 236.3L885.0 236.3L886.0 236.3L887.0 236.3L888.0 236.3L889.0 236.3L890.0 236.3L891.0 236.3L892.0 234.8L893.0 235.3L894.0 236.3L895.0 236.3L896.0 236.3L897.0 236.3L898.0 236.3L899.0 236.3L900.0 236.3L901.0 236.3L902.0 236.3L903.0 236.3L904.0 236.3L905.0 236.3L906.0 236.3L907.0 235.8L908.0 235.3L909.0 236.3L910.0 236.3L911.0 236.3L912.0 236.3L913.0 236.3L914.0 236.3L915.0 236.3L916.0 235.3L917.0 236.3L918.0 235.8L919.0 236.3L920.0 236.3L921.0 236.3L922.0 236.3L923.0 236.3L924.0 236.3L925.0 236.3L926.0 236.3L927.0 236.3L928.0 236.3L929.0 236.3L930.0 234.8L931.0 236.3L932.0 236.3L933.0 235.8L934.0 236.3L935.0 236.3L936.0 236.3L937.0 235.3L938.0 236.3L939.0 236.3L940.0 236.3L941.0 236.3L942.0 236.3L943.0 234.8L944.0 235.3L945.0 236.3L946.0 236.3L947.0 236.3L948.0 236.3L949.0 234.8L950.0 236.3L951.0 236.3L952.0 236.3L953.0 236.3L954.0 236.3L955.0 236.3L956.0 236.3L957.0 236.3L958.0 236.3L959.0 235.8L960.0 235.3L961.0 236.3L962.0 235.3L963.0 235.8L964.0 236.3L965.0 236.3L966.0 236.3L967.0 236.3L968.0 236.3L969.0 236.3L970.0 234.8L971.0 236.3L972.0 236.3L973.0 236.3L974.0 236.3L975.0 236.3L976.0 236.3L977.0 236.3L978.0 236.3L979.0 235.3L980.0 236.3L981.0 236.3L982.0 236.3L983.0 236.3L984.0 236.3L985.0 236.3L986.0 235.3L987.0 236.3L988.0 234.8L989.0 236.3L990.0 236.3L991.0 236.3L992.0 235.8L993.0 236.3L994.0 236.3L995.0 236.3L996.0 236.3L997.0 236.3L998.0 236.3L999.0 236.3L1000.0 236.3L1001.0 235.3L1002.0 236.3L1003.0 236.3L1004.0 236.3L1005.0 234.8L1006.0 235.8L1007.0 236.3L1008.0 236.3L1009.0 236.3L1010.0 236.3L1011.0 235.3L1012.0 234.8L1013.0 236.3L1014.0 236.3L1015.0 236.3L1016.0 236.3L1017.0 236.3L1018.0 236.3L1019.0 236.3L1020.0 236.3L1021.0 236.3L1022.0 235.3L1023.0 236.3L1024.0 236.3L1025.0 236.3L1026.0 236.3L1027.0 236.3L1028.0 236.3L1029.0 236.3L1030.0 236.3L1031.0 236.3L1032.0 236.3L1033.0 236.3L1034.0 236.3L1035.0 236.3L1036.0 236.3L1037.0 236.3L1038.0 236.3L1039.0 236.3L1040.0 236.3L1041.0 236.3L1042.0 236.3L1043.0 236.3L1044.0 236.3L1045.0 236.3L1046.0 236.3L1047.0 234.8L1048.0 236.3L1049.0 236.3L1050.0 236.3L1051.0 236.3L1052.0 236.3L1053.0 236.3L1054.0 236.3L1055.0 236.3L1056.0 236.3L1057.0 236.3L1058.0 236.3L1059.0 236.3L1060.0 236.3L1061.0 236.3L1062.0 236.3L1063.0 236.3L1064.0 235.3L1065.0 236.3L1066.0 236.3L1067.0 236.3L1068.0 236.3L1069.0 236.3L1070.0 236.3L1071.0 234.8L1072.0 236.3L1073.0 236.3L1074.0 236.3L1075.0 236.3L1076.0 236.3L1077.0 236.3L1078.0 236.3L1079.0 236.3L1080.0 235.8L1081.0 236.3L1082.0 236.3L1083.0 236.3L1084.0 235.8L1085.0 236.3L1086.0 236.3L1087.0 235.8L1088.0 236.3L1089.0 235.8L1090.0 234.8L1091.0 236.3L1092.0 236.3L1093.0 236.3L1094.0 235.3L1095.0 236.3L1096.0 235.8L1097.0 236.3L1098.0 235.3L1099.0 236.3L1100.0 236.3L1101.0 236.3L1102.0 236.3L1103.0 235.3L1104.0 236.3L1105.0 236.3L1106.0 235.8L1107.0 236.3L1108.0 236.3L1109.0 236.3L1110.0 236.3L1111.0 235.3L1112.0 236.3L1113.0 235.3L1114.0 236.3L1115.0 236.3L1116.0 234.8L1117.0 236.3L1118.0 236.3L1119.0 235.8L1120.0 236.3L1121.0 236.3L1122.0 236.3L1123.0 235.3L1124.0 236.3L1125.0 236.3L1126.0 236.3L1127.0 236.3L1128.0 234.8L1129.0 235.3L1130.0 236.3L1131.0 236.3L1132.0 235.8L1133.0 236.3L1134.0 234.8L1135.0 236.3L1136.0 236.3L1137.0 236.3L1138.0 235.8L1139.0 235.8L1140.0 236.3L1141.0 236.3L1142.0 236.3L1143.0 236.3L1144.0 235.3L1145.0 236.3L1146.0 236.3L1147.0 236.3L1148.0 236.3L1149.0 235.8L1150.0 236.3L1151.0 236.3L1152.0 236.3L1153.0 236.3L1154.0 234.8L1155.0 236.3L1156.0 236.3L1157.0 236.3L1158.0 235.8L1159.0 236.3L1160.0 236.3L1161.0 236.3L1162.0 236.3L1163.0 236.3L1164.0 234.8L1165.0 236.3L1166.0 236.3L1167.0 236.3L1168.0 236.3L1169.0 234.8L1170.0 236.3L1171.0 236.3L1172.0 236.3L1173.0 236.3L1174.0 236.3L1175.0 236.3L1176.0 236.3L1177.0 236.3L1178.0 236.3L1179.0 236.3L1180.0 236.3L1181.0 236.3L1182.0 236.3L1183.0 235.3L1184.0 236.3L1185.0 236.3L1186.0 236.3L1187.0 236.3L1188.0 236.3L1189.0 235.8L1190.0 236.3L1191.0 236.3L1192.0 234.8L1193.0 236.3L1194.0 236.3L1195.0 236.3L1196.0 236.3L1197.0 236.3L1198.0 236.3L1199.0 235.3L1200.0 236.3L1201.0 236.3L1202.0 236.3L1203.0 236.3L1204.0 236.3L1205.0 236.3L1206.0 235.3L1207.0 236.3L1208.0 235.8L1209.0 236.3L1210.0 236.3L1211.0 235.8L1212.0 236.3L1213.0 236.3L1214.0 235.8L1215.0 236.3L1216.0 236.3L1217.0 235.3L1218.0 236.3L1219.0 236.3L1220.0 236.3L1221.0 236.3L1222.0 236.3L1223.0 236.3L1224.0 236.3L1225.0 236.3L1226.0 234.8L1227.0 236.3L1228.0 235.3L1229.0 236.3L1230.0 236.3L1231.0 236.3L1232.0 236.3L1233.0 236.3L1234.0 236.3L1235.0 236.3L1236.0 236.3L1237.0 236.3L1238.0 236.3L1239.0 235.8L1240.0 236.3L1241.0 234.8L1242.0 236.3L1243.0 236.3L1244.0 236.3L1245.0 236.3L1246.0 235.3L1247.0 236.3L1248.0 236.3L1249.0 236.3L1250.0 236.3L1251.0 236.3L1252.0 236.3L1253.0 236.3L1254.0 236.3L1255.0 235.8L1256.0 236.3L1257.0 236.3L1258.0 236.3L1259.0 236.3L1260.0 236.3L1261.0 236.3L1262.0 236.3L1263.0 234.8L1264.0 236.3L1265.0 236.3L1266.0 236.3L1267.0 236.3L1268.0 236.3L1269.0 236.3L1270.0 236.3L1271.0 236.3L1272.0 236.3L1273.0 236.3L1274.0 236.3L1275.0 236.3L1276.0 235.8L1277.0 234.8L1278.0 236.3L1279.0 236.3L1280.0 236.3L1281.0 236.3L1282.0 236.3L1283.0 235.8L1284.0 236.3L1285.0 236.3L1286.0 235.8L1287.0 236.3L1288.0 236.3L1289.0 236.3L1290.0 236.3L1291.0 235.8L1292.0 236.3L1293.0 236.3L1294.0 236.3L1295.0 236.3L1296.0 236.3L1297.0 235.8L1298.0 236.3L1299.0 236.3L1300.0 234.8L1301.0 236.3L1302.0 236.3L1303.0 235.8L1304.0 234.8L1305.0 236.3L1306.0 236.3L1307.0 236.3L1308.0 236.3L1309.0 236.3L1310.0 235.3L1311.0 236.3L1312.0 235.3L1313.0 236.3L1314.0 236.3L1315.0 235.3L1316.0 236.3L1317.0 235.8L1318.0 236.3L1319.0 235.8L1320.0 236.3L1321.0 236.3L1322.0 236.3L1323.0 236.3L1324.0 236.3L1325.0 234.8L1326.0 235.3L1327.0 236.3L1328.0 236.3L1329.0 236.3L1330.0 236.3L1331.0 236.3L1332.0 235.3L1333.0 236.3L1334.0 236.3L1335.0 236.3L1336.0 236.3L1337.0 236.3L1338.0 236.3L1339.0 234.8L1340.0 236.3L1341.0 236.3L1342.0 234.8L1343.0 236.3L1344.0 236.3L1345.0 236.3L1346.0 236.3L1347.0 236.3L1348.0 235.8L1349.0 236.3L1350.0 236.3L1351.0 236.3L1352.0 236.3L1353.0 235.8L1354.0 235.3L1355.0 236.3L1356.0 236.3L1357.0 235.8L1358.0 234.8L1359.0 236.3L1360.0 234.8L1361.0 236.3L1362.0 235.3L1363.0 236.3L1364.0 236.3L1365.0 236.3L1366.0 236.3L1367.0 235.3L1368.0 236.3L1369.0 235.3L1370.0 236.3L1371.0 236.3L1372.0 236.3L1373.0 236.3L1374.0 236.3L1375.0 236.3L1376.0 236.3L1377.0 236.3L1378.0 236.3L1379.0 236.3L1380.0 236.3L1381.0 236.3L1382.0 236.3L1383.0 236.3L1384.0 236.3L1385.0 236.3L1386.0 236.3L1387.0 236.3L1388.0 235.8L1389.0 235.3L1390.0 236.3L1391.0 236.3L1392.0 236.3L1393.0 236.3L1394.0 236.3L1395.0 236.3L1396.0 236.3L1397.0 236.3L1398.0 236.3L1399.0 236.3L1400.0 236.3L1401.0 236.3L1402.0 236.3L1403.0 235.3L1404.0 236.3L1405.0 236.3L1406.0 236.3L1407.0 236.3L1408.0 236.3L1409.0 236.3L1410.0 236.3L1411.0 234.8L1412.0 236.3L1413.0 236.3L1414.0 235.3L1415.0 236.3L1416.0 234.8L1417.0 236.3L1418.0 235.8L1419.0 236.3L1420.0 236.3L1421.0 236.3L1422.0 236.3L1423.0 236.3L1424.0 236.3L1425.0 235.8L1426.0 236.3L1427.0 236.3L1428.0 236.3L1429.0 235.8L1430.0 236.3L1431.0 236.3L1432.0 236.3L1433.0 235.8L1434.0 236.3L1435.0 236.3L1436.0 235.8L1437.0 236.3L1438.0 236.3L1439.0 236.3L1440.0 236.3L1441.0 236.3L1442.0 235.3L1443.0 236.3L1444.0 236.3L1445.0 236.3L1446.0 236.3L1447.0 236.3L1448.0 235.8L1449.0 235.8L1450.0 236.3L1451.0 236.3L1452.0 236.3L1453.0 235.8L1454.0 236.3L1455.0 236.3L1456.0 235.3L1457.0 236.3L1458.0 236.3L1459.0 236.3L1460.0 236.3L1461.0 236.3L1462.0 236.3L1463.0 236.3L1464.0 236.3L1465.0 236.3L1466.0 236.3L1467.0 235.8L1468.0 236.3L1469.0 236.3L1470.0 236.3L1471.0 236.3L1472.0 236.3L1473.0 236.3L1474.0 236.3L1475.0 236.3L1476.0 236.3L1477.0 235.3L1478.0 236.3L1479.0 236.3L1480.0 236.3L1481.0 236.3L1482.0 235.8L1483.0 236.3L1484.0 235.3L1485.0 235.3L1486.0 236.3L1487.0 235.8L1488.0 236.3L1489.0 236.3L1490.0 236.3L1491.0 236.3L1492.0 236.3L1493.0 236.3L1494.0 236.3L1495.0 236.3L1496.0 236.3L1497.0 236.3L1498.0 234.8L1499.0 236.3L1500.0 235.3L1501.0 236.3L1502.0 236.3L1503.0 236.3L1504.0 236.3L1505.0 236.3L1506.0 235.3L1507.0 236.3L1508.0 236.3L1509.0 236.3L1510.0 236.3L1511.0 235.3L1512.0 236.3L1513.0 235.8L1514.0 236.3L1515.0 234.8L1516.0 236.3L1517.0 235.3L1518.0 236.3L1519.0 236.3L1520.0 236.3L1521.0 236.3L1522.0 236.3L1523.0 236.3L1524.0 236.3L1525.0 236.3L1526.0 236.3L1527.0 236.3L1528.0 236.3L1529.0 235.3L1530.0 236.3L1531.0 236.3L1532.0 236.3L1533.0 236.3L1534.0 236.3L1535.0 236.3L1536.0 236.3L1537.0 236.3L1538.0 236.3L1539.0 234.8L1540.0 236.3L1541.0 235.3L1542.0 236.3L1543.0 235.8L1544.0 236.3L1545.0 236.3L1546.0 236.3L1547.0 236.3L1548.0 235.3L1549.0 236.3L1550.0 236.3L1551.0 235.8L1552.0 234.8L1553.0 234.8L1554.0 236.3L1555.0 236.3L1556.0 236.3L1557.0 235.3L1558.0 236.3L1559.0 236.3L1560.0 235.3L1561.0 236.3L1562.0 236.3L1563.0 236.3L1564.0 236.3L1565.0 234.8L1566.0 235.8L1567.0 236.3L1568.0 236.3L1569.0 234.8L1570.0 236.3L1571.0 236.3L1572.0 236.3L1573.0 236.3L1574.0 234.8L1575.0 235.3L1576.0 236.3L1577.0 236.3L1578.0 236.3L1579.0 236.3L1580.0 236.3L1581.0 236.3L1582.0 236.3L1583.0 236.3L1584.0 236.3L1585.0 236.3L1586.0 236.3L1587.0 236.3L1588.0 236.3L1589.0 236.3L1590.0 235.8L1591.0 235.8L1592.0 236.3L1593.0 236.3L1594.0 236.3L1595.0 234.8L1596.0 236.3L1597.0 236.3L1598.0 235.3L1599.0 236.3L1600.0 236.3L1601.0 235.8L1602.0 236.3L1603.0 236.3L1604.0 235.8L1605.0 236.3L1606.0 236.3L1607.0 234.8L1608.0 236.3L1609.0 236.3L1610.0 236.3L1611.0 236.3L1612.0 234.8L1613.0 236.3L1614.0 236.3L1615.0 236.3L1616.0 236.3L1617.0 236.3L1618.0 236.3L1619.0 236.3L1620.0 236.3L1621.0 236.3L1622.0 234.8L1623.0 236.3L1624.0 236.3L1625.0 236.3L1626.0 236.3L1627.0 234.8L1628.0 236.3L1629.0 236.3L1630.0 234.8L1631.0 236.3L1632.0 236.3L1633.0 236.3L1634.0 236.3L1635.0 236.3L1636.0 236.3L1637.0 236.3L1638.0 236.3L1639.0 236.3L1640.0 236.3L1641.0 236.3L1642.0 236.3L1643.0 236.3L1644.0 234.8L1645.0 234.8L1646.0 236.3L1647.0 234.8L1648.0 236.3L1649.0 236.3L1650.0 236.3L1651.0 236.3L1652.0 236.3L1653.0 236.3L1654.0 236.3L1655.0 236.3L1656.0 236.3L1657.0 236.3L1658.0 236.3" stroke-width="1.6"/>
</g>
<g fill="none" stroke-width="1.35" stroke-linejoin="round">
<path stroke="#ff0000" d="M537.0 489.5L538.0 489.5L539.0 491.5L540.0 492.5L541.0 493.0L542.0 493.5L543.0 494.5L544.0 494.5L545.0 496.0L546.0 493.5L547.0 490.0L548.0 475.5L549.0 460.0L550.0 445.0L551.0 437.5L552.0 430.5L553.0 423.0L554.0 417.5L555.0 414.5L556.0 409.5L557.0 406.0L558.0 404.0L559.0 402.0L560.0 400.5L561.0 399.0L562.0 403.0L563.0 408.5L564.0 417.5L565.0 428.0L566.0 436.5L567.0 438.5L568.0 440.0L569.0 442.0L570.0 445.5L571.0 449.0L572.0 451.5L573.0 454.0L574.0 456.5L575.0 459.0L576.0 460.0L577.0 462.0L578.0 464.5L579.0 467.0L580.0 468.0L581.0 469.0L582.0 470.5L583.0 473.0L584.0 473.5L585.0 475.0L586.0 476.5L587.0 478.0L588.0 479.5L589.0 480.5L590.0 482.0L591.0 484.0L592.0 484.5L593.0 485.5L594.0 487.0L595.0 487.5L596.0 488.5L597.0 490.0L598.0 490.0L599.0 491.0L600.0 493.0L601.0 492.5L602.0 493.0L603.0 494.0L604.0 496.0L605.0 495.5L606.0 492.5L607.0 483.5L608.0 468.0L609.0 454.0L610.0 444.0L611.0 436.5L612.0 429.5L613.0 423.0L614.0 419.5L615.0 415.0L616.0 411.0L617.0 407.5L618.0 406.5L619.0 405.5L620.0 404.0L621.0 405.5L622.0 409.5L623.0 417.5L624.0 428.0L625.0 438.5L626.0 443.0L627.0 445.5L628.0 446.5L629.0 449.0L630.0 454.0L631.0 456.0L632.0 458.0L633.0 461.5L634.0 463.5L635.0 465.5L636.0 467.0L637.0 469.0L638.0 470.5L639.0 473.5L640.0 475.0L641.0 476.5L642.0 478.5L643.0 479.5L644.0 481.5L645.0 483.0L646.0 484.5L647.0 485.0L648.0 487.0L649.0 488.5L650.0 489.5L651.0 490.5L652.0 492.0L653.0 493.0L654.0 493.5L655.0 495.0L656.0 495.5L657.0 496.5L658.0 497.5L659.0 498.5L660.0 500.0L661.0 500.0L662.0 501.5L663.0 501.5L664.0 502.0L665.0 503.5L666.0 499.0L667.0 488.5L668.0 470.5L669.0 453.5L670.0 440.5L671.0 432.0L672.0 424.0L673.0 415.5L674.0 412.0L675.0 407.0L676.0 401.5L677.0 398.5L678.0 396.0L679.0 394.0L680.0 392.5L681.0 394.5L682.0 399.0L683.0 407.0L684.0 417.5L685.0 429.5L686.0 434.0L687.0 435.5L688.0 437.5L689.0 440.0L690.0 444.5L691.0 447.0L692.0 450.0L693.0 453.0L694.0 455.0L695.0 457.0L696.0 459.0L697.0 461.5L698.0 464.0L699.0 465.5L700.0 466.5L701.0 469.5L702.0 471.0L703.0 472.5L704.0 473.0L705.0 475.0L706.0 476.5L707.0 477.5L708.0 479.5L709.0 481.0L710.0 482.5L711.0 483.5L712.0 484.5L713.0 486.0L714.0 486.5L715.0 488.0L716.0 489.0L717.0 489.5L718.0 490.5L719.0 492.0L720.0 493.0L721.0 493.0L722.0 494.0L723.0 495.0L724.0 495.5L725.0 492.0L726.0 483.0L727.0 468.5L728.0 453.0L729.0 442.0L730.0 434.5L731.0 428.0L732.0 420.5L733.0 417.0L734.0 412.5L735.0 409.0L736.0 405.5L737.0 404.0L738.0 403.0L739.0 401.0L740.0 402.0L741.0 407.0L742.0 414.5L743.0 424.0L744.0 435.0L745.0 439.5L746.0 441.0L747.0 442.5L748.0 446.0L749.0 449.5L750.0 452.0L751.0 454.5L752.0 456.5L753.0 459.0L754.0 460.5L755.0 462.5L756.0 464.5L757.0 467.0L758.0 469.5L759.0 470.0L760.0 472.0L761.0 473.0L762.0 475.0L763.0 476.0L764.0 478.0L765.0 479.0L766.0 480.5L767.0 481.5L768.0 483.5L769.0 484.0L770.0 486.5L771.0 487.0L772.0 488.5L773.0 489.5L774.0 490.0L775.0 491.5L776.0 492.0L777.0 493.5L778.0 494.0L779.0 494.0L780.0 495.5L781.0 496.0L782.0 496.5L783.0 497.5L784.0 496.0L785.0 492.5L786.0 477.5L787.0 462.5L788.0 448.5L789.0 440.5L790.0 434.5L791.0 427.0L792.0 421.0L793.0 418.0L794.0 414.0L795.0 410.0L796.0 408.0L797.0 406.5L798.0 404.5L799.0 403.0L800.0 406.5L801.0 411.0L802.0 421.5L803.0 432.0L804.0 438.5L805.0 441.0L806.0 442.0L807.0 444.5L808.0 448.0L809.0 450.0L810.0 452.0L811.0 455.5L812.0 457.0L813.0 459.0L814.0 461.5L815.0 463.5L816.0 464.5L817.0 466.0L818.0 469.0L819.0 470.5L820.0 471.0L821.0 472.5L822.0 474.0L823.0 475.0L824.0 476.5L825.0 477.5L826.0 478.5L827.0 480.0L828.0 481.5L829.0 483.0L830.0 484.5L831.0 484.5L832.0 485.5L833.0 487.0L834.0 488.0L835.0 489.0L836.0 489.5L837.0 491.0L838.0 491.0L839.0 492.0L840.0 492.5L841.0 494.0L842.0 495.0L843.0 495.0L844.0 496.0L845.0 494.0L846.0 490.5L847.0 475.5L848.0 460.0L849.0 445.0L850.0 438.0L851.0 430.0L852.0 423.5L853.0 417.5L854.0 413.5L855.0 410.5L856.0 406.0L857.0 404.0L858.0 401.5L859.0 400.0L860.0 398.5L861.0 403.5L862.0 407.5L863.0 418.0L864.0 429.0L865.0 436.5L866.0 438.5L867.0 440.5L868.0 441.5L869.0 445.5L870.0 448.5L871.0 451.5L872.0 453.5L873.0 455.5L874.0 458.0L875.0 460.0L876.0 462.0L877.0 463.5L878.0 466.0L879.0 467.0L880.0 468.5L881.0 471.0L882.0 472.0L883.0 473.5L884.0 475.0L885.0 476.0L886.0 478.0L887.0 478.5L888.0 480.5L889.0 481.5L890.0 482.5L891.0 483.0L892.0 485.5L893.0 486.5L894.0 486.5L895.0 488.5L896.0 488.5L897.0 490.0L898.0 491.0L899.0 492.0L900.0 492.0L901.0 493.5L902.0 494.0L903.0 495.0L904.0 495.5L905.0 495.5L906.0 492.5L907.0 483.5L908.0 468.5L909.0 454.0L910.0 444.0L911.0 437.0L912.0 429.5L913.0 423.0L914.0 419.0L915.0 415.5L916.0 410.5L917.0 407.5L918.0 406.0L919.0 404.5L920.0 403.0L921.0 404.0L922.0 409.0L923.0 416.0L924.0 425.5L925.0 435.5L926.0 440.0L927.0 445.0L928.0 448.5L929.0 447.0L930.0 453.5L931.0 459.0L932.0 460.0L933.0 463.5L934.0 465.0L935.0 467.5L936.0 469.5L937.0 472.0L938.0 473.0L939.0 475.5L940.0 476.5L941.0 479.0L942.0 480.0L943.0 481.0L944.0 484.0L945.0 484.5L946.0 486.0L947.0 487.0L948.0 488.0"/>
<path stroke="#ff0000" d="M949.5 467.5L950.5 452.5L951.5 441.0L952.5 434.5L953.5 427.5L954.5 421.0L955.5 417.0L956.5 411.5L957.5 408.5L958.5 404.5L959.5 403.0L960.5 402.0L961.5 400.0L962.5 401.5L963.5 406.0L964.5 413.5L965.5 424.5L966.5 434.5L967.5 439.5L968.5 441.0L969.5 442.5L970.5 445.5L971.5 448.5L972.5 452.0L973.5 454.0L974.5 456.5L975.5 458.5L976.5 460.5L977.5 463.0L978.5 464.0L979.5 466.5L980.5 468.5L981.5 470.0L982.5 471.0L983.5 473.5L984.5 474.0L985.5 476.0L986.5 477.5L987.5 479.0L988.5 481.0L989.5 482.0L990.5 482.5L991.5 484.5L992.5 485.5L993.5 486.5L994.5 488.0L995.5 488.0L996.5 489.5L997.5 490.5L998.5 492.0L999.5 492.5L1000.5 494.0L1001.5 494.5L1002.5 495.5L1003.5 496.0L1004.5 496.5L1005.5 497.0L1006.5 497.5L1007.5 493.5L1008.5 485.0L1009.5 470.5L1010.5 455.5L1011.5 444.5L1012.5 437.0L1013.5 430.0L1014.5 423.5L1015.5 419.5L1016.5 415.0L1017.5 411.0L1018.5 407.5L1019.5 406.5L1020.5 405.0L1021.5 403.5L1022.5 405.0L1023.5 408.5L1024.5 415.5L1025.5 426.5L1026.5 437.0L1027.5 440.5L1028.5 441.5L1029.5 443.5L1030.5 445.5L1031.5 450.0L1032.5 452.5L1033.5 454.5L1034.5 457.5L1035.5 460.0L1036.5 460.5L1037.5 463.5L1038.5 464.5L1039.5 467.0L1040.5 469.0L1041.5 470.5L1042.5 472.0L1043.5 473.5L1044.5 474.5L1045.5 476.0L1046.5 478.0L1047.5 478.5L1048.5 480.0L1049.5 481.5L1050.5 482.5L1051.5 484.0L1052.5 484.5L1053.5 486.5L1054.5 487.0L1055.5 487.5L1056.5 488.5L1057.5 490.0L1058.5 490.0L1059.5 492.0L1060.5 492.0L1061.5 493.5L1062.5 494.0L1063.5 494.5L1064.5 495.5L1065.5 496.0L1066.5 494.0L1067.5 490.5L1068.5 475.5L1069.5 460.0L1070.5 445.5L1071.5 437.5L1072.5 430.5L1073.5 423.0L1074.5 418.0L1075.5 414.0L1076.5 409.0L1077.5 405.0L1078.5 403.0L1079.5 402.0L1080.5 399.5L1081.5 399.0L1082.5 403.0L1083.5 406.5L1084.5 417.5L1085.5 428.5L1086.5 436.0L1087.5 438.0L1088.5 439.0L1089.5 441.0L1090.5 445.0L1091.5 448.0L1092.5 451.0L1093.5 452.5L1094.5 455.5L1095.5 457.5L1096.5 458.5L1097.5 460.5L1098.5 463.0L1099.5 464.5L1100.5 466.5L1101.5 469.0L1102.5 470.0L1103.5 471.0L1104.5 473.5L1105.5 474.0L1106.5 475.5L1107.5 477.0L1108.5 478.0L1109.5 480.0L1110.5 481.0L1111.5 481.5L1112.5 483.0L1113.5 485.0L1114.5 485.0L1115.5 486.0L1116.5 487.0L1117.5 489.0L1118.5 489.0L1119.5 490.5L1120.5 490.5L1121.5 491.5L1122.5 492.5L1123.5 493.0L1124.5 494.5L1125.5 494.5L1126.5 496.0L1127.5 492.5L1128.5 482.0L1129.5 468.5L1130.5 453.5L1131.5 443.0L1132.5 435.5L1133.5 429.5L1134.5 422.5L1135.5 418.0L1136.5 415.0L1137.5 411.0L1138.5 407.5L1139.5 405.5L1140.5 404.0L1141.5 403.5L1142.5 404.0L1143.5 409.0L1144.5 416.5L1145.5 428.0L1146.5 438.0L1147.5 443.0L1148.5 444.5L1149.5 446.0L1150.5 448.5L1151.5 452.5L1152.5 455.0L1153.5 458.0L1154.5 460.5L1155.5 462.0L1156.5 464.5L1157.5 466.0L1158.5 469.0L1159.5 471.0L1160.5 472.0L1161.5 474.5L1162.5 475.5L1163.5 477.0L1164.5 478.0L1165.5 480.0L1166.5 482.0L1167.5 483.5L1168.5 485.0L1169.5 485.0L1170.5 487.5L1171.5 488.5L1172.5 490.0L1173.5 491.5L1174.5 492.0L1175.5 493.0L1176.5 494.5L1177.5 494.5L1178.5 495.5L1179.5 497.0L1180.5 497.5L1181.5 498.5L1182.5 499.5L1183.5 500.5L1184.5 500.5L1185.5 502.0L1186.5 502.0L1187.5 497.5L1188.5 487.5L1189.5 470.0L1190.5 453.0L1191.5 440.5L1192.5 432.0L1193.5 424.5L1194.5 415.5L1195.5 412.0L1196.5 407.0L1197.5 402.5L1198.5 399.0L1199.5 397.5L1200.5 395.0L1201.5 393.5L1202.5 394.5L1203.5 399.0L1204.5 407.0L1205.5 418.0L1206.5 429.5L1207.5 433.5L1208.5 435.5L1209.5 437.0L1210.5 440.0L1211.5 445.0L1212.5 447.0L1213.5 449.5L1214.5 452.5L1215.5 455.0L1216.5 456.5L1217.5 459.5L1218.5 461.0L1219.5 463.0L1220.5 465.5L1221.5 467.5L1222.5 468.0L1223.5 470.5L1224.5 471.0L1225.5 474.0L1226.5 474.5L1227.5 476.0L1228.5 477.5L1229.5 479.0L1230.5 481.0L1231.5 482.5L1232.5 483.0L1233.5 484.0L1234.5 485.0L1235.5 486.5L1236.5 487.0L1237.5 488.5L1238.5 490.0L1239.5 490.5L1240.5 491.0L1241.5 492.0L1242.5 493.0L1243.5 494.0L1244.5 494.0L1245.5 495.5L1246.5 492.0L1247.5 483.0L1248.5 467.5L1249.5 453.0L1250.5 441.5L1251.5 435.0L1252.5 427.5L1253.5 420.0L1254.5 415.5L1255.5 412.0L1256.5 407.5L1257.5 404.5L1258.5 403.5L1259.5 402.0L1260.5 400.5L1261.5 402.0L1262.5 406.5L1263.5 414.0L1264.5 424.5L1265.5 434.5L1266.5 438.5L1267.5 440.5L1268.5 441.5L1269.5 443.5L1270.5 447.5L1271.5 450.5L1272.5 453.5L1273.5 455.5L1274.5 457.5L1275.5 459.0L1276.5 461.0L1277.5 463.5L1278.5 465.0L1279.5 466.5L1280.5 469.5L1281.5 470.0L1282.5 472.0L1283.5 473.0L1284.5 475.0L1285.5 475.5L1286.5 477.5L1287.5 479.0L1288.5 480.0L1289.5 480.5L1290.5 482.0L1291.5 483.5L1292.5 485.0L1293.5 485.5L1294.5 486.5L1295.5 488.0L1296.5 489.5L1297.5 490.0L1298.5 490.5L1299.5 491.5L1300.5 493.0L1301.5 494.0L1302.5 493.5L1303.5 495.0L1304.5 496.0L1305.5 496.0L1306.5 497.0L1307.5 493.0L1308.5 484.0L1309.5 470.0L1310.5 455.5L1311.5 444.5L1312.5 437.0L1313.5 431.0L1314.5 423.5L1315.5 419.5L1316.5 416.5L1317.5 412.0L1318.5 409.5L1319.5 408.0L1320.5 405.5L1321.5 404.5L1322.5 405.5L1323.5 410.0L1324.5 416.5L1325.5 427.0L1326.5 437.0L1327.5 440.0L1328.5 442.0L1329.5 443.0L1330.5 445.5L1331.5 449.5L1332.5 452.5L1333.5 454.0L1334.5 456.5L1335.5 458.5L1336.5 460.5L1337.5 462.0L1338.5 464.5L1339.5 466.0L1340.5 468.0L1341.5 469.0L1342.5 471.0L1343.5 472.0L1344.5 473.0L1345.5 475.5L1346.5 476.5L1347.5 477.5L1348.5 479.0L1349.5 480.0L1350.5 481.0L1351.5 482.0L1352.5 483.5L1353.5 485.5L1354.5 485.5L1355.5 486.5L1356.5 488.0L1357.5 488.5L1358.5 489.0L1359.5 490.0L1360.5 491.5L1361.5 492.0L1362.5 493.0L1363.5 493.5L1364.5 493.5L1365.5 494.5L1366.5 495.5L1367.5 491.5L1368.5 482.5L1369.5 467.5L1370.5 452.5L1371.5 441.5L1372.5 433.5L1373.5 426.0L1374.5 420.0L1375.5 416.0L1376.5 411.5L1377.5 407.0L1378.5 404.5L1379.5 402.5L1380.5 400.5L1381.5 399.0L1382.5 401.0L1383.5 405.5L1384.5 412.0L1385.5 422.5L1386.5 433.0L1387.5 437.5L1388.5 438.5L1389.5 440.0L1390.5 443.5L1391.5 447.0L1392.5 449.0L1393.5 452.0L1394.5 454.5L1395.5 456.5L1396.5 458.5L1397.5 460.0L1398.5 462.0L1399.5 464.0L1400.5 466.0L1401.5 467.5L1402.5 469.5L1403.5 471.0L1404.5 472.0L1405.5 473.5L1406.5 475.5L1407.5 476.5L1408.5 477.5L1409.5 478.5L1410.5 480.5L1411.5 481.5L1412.5 483.0L1413.5 484.5L1414.5 485.0L1415.5 486.5L1416.5 486.5L1417.5 488.0L1418.5 488.5L1419.5 490.0L1420.5 490.0L1421.5 491.0L1422.5 492.0L1423.5 493.0L1424.5 493.5L1425.5 494.0L1426.5 495.5L1427.5 491.0L1428.5 482.5L1429.5 468.5L1430.5 453.5L1431.5 443.0L1432.5 437.0L1433.5 429.5L1434.5 422.5L1435.5 419.0L1436.5 415.0L1437.5 411.5L1438.5 408.0L1439.5 407.5L1440.5 405.5L1441.5 403.5L1442.5 406.0L1443.5 410.0L1444.5 417.5L1445.5 428.5L1446.5 440.0L1447.5 443.0L1448.5 445.0L1449.5 446.0L1450.5 450.0L1451.5 453.5L1452.5 456.5L1453.5 458.5L1454.5 461.5L1455.5 463.5L1456.5 465.5L1457.5 467.5L1458.5 469.5L1459.5 471.5L1460.5 473.0L1461.5 474.5L1462.5 476.0L1463.5 478.5L1464.5 480.0L1465.5 481.5L1466.5 483.0L1467.5 485.0L1468.5 485.5L1469.5 487.0L1470.5 488.5L1471.5 489.5L1472.5 490.5L1473.5 492.0L1474.5 493.0L1475.5 494.5L1476.5 495.0L1477.5 496.5L1478.5 497.5L1479.5 498.0L1480.5 498.5L1481.5 500.5L1482.5 500.0L1483.5 501.5L1484.5 502.5L1485.5 502.5L1486.5 503.0L1487.5 498.5L1488.5 488.0L1489.5 470.5L1490.5 453.0L1491.5 441.5L1492.5 432.0L1493.5 424.0L1494.5 415.5L1495.5 411.5L1496.5 406.5L1497.5 402.0L1498.5 398.5L1499.5 396.0L1500.5 394.5L1501.5 393.5L1502.5 394.5L1503.5 399.5L1504.5 406.5L1505.5 417.5L1506.5 428.5L1507.5 434.0L1508.5 435.5L1509.5 436.5L1510.5 440.5L1511.5 444.5L1512.5 447.0L1513.5 450.5L1514.5 453.0L1515.5 455.5L1516.5 457.0L1517.5 460.0L1518.5 462.0L1519.5 464.0L1520.5 465.5L1521.5 468.0L1522.5 469.0L1523.5 470.5L1524.5 471.5L1525.5 474.0L1526.5 475.5L1527.5 477.0L1528.5 477.5L1529.5 479.0L1530.5 480.5L1531.5 482.5L1532.5 484.0L1533.5 485.0L1534.5 486.0L1535.5 487.5L1536.5 488.5L1537.5 489.0L1538.5 490.0L1539.5 490.5L1540.5 491.5L1541.5 492.5L1542.5 493.0L1543.5 494.0L1544.5 494.5L1545.5 493.5L1546.5 490.0L1547.5 474.5L1548.5 460.5L1549.5 445.5L1550.5 438.0L1551.5 431.0L1552.5 423.5L1553.5 418.5L1554.5 413.5L1555.5 409.5L1556.5 406.5L1557.5 404.5L1558.5 402.5L1559.5 401.0L1560.5 400.0L1561.5 404.0L1562.5 408.5L1563.5 419.5L1564.5 430.0L1565.5 437.0L1566.5 439.5L1567.5 441.5L1568.5 442.5L1569.5 447.0L1570.5 449.5L1571.5 452.5L1572.5 455.0L1573.5 458.0L1574.5 459.5L1575.5 461.0L1576.5 463.0L1577.5 465.0L1578.5 467.5L1579.5 468.5L1580.5 471.0L1581.5 472.5L1582.5 473.0L1583.5 474.5L1584.5 476.0L1585.5 478.5L1586.5 478.5L1587.5 480.0L1588.5 482.0L1589.5 483.5L1590.5 484.0L1591.5 485.5L1592.5 487.0L1593.5 488.0L1594.5 488.5L1595.5 490.0L1596.5 491.0L1597.5 492.5L1598.5 492.5L1599.5 494.0L1600.5 494.5L1601.5 495.0L1602.5 495.5L1603.5 497.0L1604.5 497.5L1605.5 498.5L1606.5 494.5L1607.5 484.5L1608.5 470.5L1609.5 455.5L1610.5 444.5L1611.5 438.0L1612.5 431.5L1613.5 424.0L1614.5 420.5L1615.5 416.0L1616.5 412.5L1617.5 409.0L1618.5 407.0L1619.5 406.0L1620.5 404.5L1621.5 406.0L1622.5 409.5L1623.5 417.5L1624.5 426.5L1625.5 437.0L1626.5 440.5L1627.5 442.0L1628.5 443.5L1629.5 446.5L1630.5 450.0L1631.5 453.0L1632.5 454.5L1633.5 457.0L1634.5 459.0L1635.5 461.0L1636.5 462.5L1637.5 465.0L1638.5 466.5L1639.5 469.0L1640.5 469.5L1641.5 470.5L1642.5 472.5L1643.5 474.5L1644.5 475.0L1645.5 477.0L1646.5 478.5L1647.5 479.5L1648.5 481.0L1649.5 481.5L1650.5 483.0L1651.5 483.5L1652.5 485.0L1653.5 487.0L1654.5 487.5L1655.5 488.5L1656.5 488.5L1657.5 490.0"/>
<path stroke="#ff0000" d="M949.2 488.0V467.5"/>
<path stroke="#ffff00" d="M537.0 509.5L538.0 511.5L539.0 512.0L540.0 512.5L541.0 513.0L542.0 512.5L543.0 511.5L544.0 510.5L545.0 504.0L546.0 495.5L547.0 486.0L548.0 476.0L549.0 467.0L550.0 456.5L551.0 447.0L552.0 441.0L553.0 435.5L554.0 431.0L555.0 426.0L556.0 422.0L557.0 419.0L558.0 416.5L559.0 413.5L560.0 412.0L561.0 410.5L562.0 410.5L563.0 416.0L564.0 424.0L565.0 434.0L566.0 445.0L567.0 455.0L568.0 462.0L569.0 465.5L570.0 468.5L571.0 471.0L572.0 473.5L573.0 477.0L574.0 479.5L575.0 481.5L576.0 484.0L577.0 487.0L578.0 488.5L579.0 490.0L580.0 491.0L581.0 493.5L582.0 494.5L583.0 496.0L584.0 497.0L585.0 498.5L586.0 500.0L587.0 501.0L588.0 501.5L589.0 503.0L590.0 504.5L591.0 505.5L592.0 505.5L593.0 506.5L594.0 507.5L595.0 508.0L596.0 509.5L597.0 511.0L598.0 512.5L599.0 512.0L600.0 513.5L601.0 512.0L602.0 512.0L603.0 511.0L604.0 508.5L605.0 501.0L606.0 491.0L607.0 483.0L608.0 473.0L609.0 463.5L610.0 454.5L611.0 446.5L612.0 441.0L613.0 436.0L614.0 432.0L615.0 427.0L616.0 424.5L617.0 422.0L618.0 419.0L619.0 416.0L620.0 416.0L621.0 415.0L622.0 417.5L623.0 424.5L624.0 434.5L625.0 445.5L626.0 457.0L627.0 468.0L628.0 472.0L629.0 475.0L630.0 477.5L631.0 481.0L632.0 483.5L633.0 487.0L634.0 489.5L635.0 492.0L636.0 495.5L637.0 497.5L638.0 498.5L639.0 500.0L640.0 502.0L641.0 504.5L642.0 505.5L643.0 507.0L644.0 508.0L645.0 509.5L646.0 510.5L647.0 512.5L648.0 513.0L649.0 514.0L650.0 516.0L651.0 517.0L652.0 517.5L653.0 519.0L654.0 518.5L655.0 520.5L656.0 521.0L657.0 522.0L658.0 524.5L659.0 525.0L660.0 525.5L661.0 524.5L662.0 524.0L663.0 522.5L664.0 520.0L665.0 509.0L666.0 499.0L667.0 487.5L668.0 475.5L669.0 463.5L670.0 452.5L671.0 443.0L672.0 437.0L673.0 430.0L674.0 425.0L675.0 420.0L676.0 416.5L677.0 412.0L678.0 408.5L679.0 406.0L680.0 404.5L681.0 403.0L682.0 407.0L683.0 412.5L684.0 423.0L685.0 434.5L686.0 445.0L687.0 457.0L688.0 459.5L689.0 463.5L690.0 467.0L691.0 469.5L692.0 473.5L693.0 476.5L694.0 479.0L695.0 481.5L696.0 484.5L697.0 486.5L698.0 488.5L699.0 489.5L700.0 491.5L701.0 493.5L702.0 494.0L703.0 496.0L704.0 497.0L705.0 498.5L706.0 499.5L707.0 501.0L708.0 502.5L709.0 503.0L710.0 504.0L711.0 505.5L712.0 506.5L713.0 507.0L714.0 508.0L715.0 508.5L716.0 511.0L717.0 512.0L718.0 512.5L719.0 512.5L720.0 512.5L721.0 512.0L722.0 511.5L723.0 509.0L724.0 499.5L725.0 491.0L726.0 482.0L727.0 472.0L728.0 462.5L729.0 452.0L730.0 444.0L731.0 438.5L732.0 434.5L733.0 429.5L734.0 425.0L735.0 422.0L736.0 419.0L737.0 415.5L738.0 413.5L739.0 412.0L740.0 411.0L741.0 414.5L742.0 420.5L743.0 430.0L744.0 441.5L745.0 452.0L746.0 462.5L747.0 465.5L748.0 469.0L749.0 472.5L750.0 475.5L751.0 477.5L752.0 480.5L753.0 484.0L754.0 486.0L755.0 489.0L756.0 490.0L757.0 491.5L758.0 494.5L759.0 495.5L760.0 497.5L761.0 499.0L762.0 499.0L763.0 500.5L764.0 502.0L765.0 503.5L766.0 504.5L767.0 505.5L768.0 506.5L769.0 507.5L770.0 508.5L771.0 510.0L772.0 510.5L773.0 511.0L774.0 512.0L775.0 513.0L776.0 515.5L777.0 516.0L778.0 516.5L779.0 516.0L780.0 515.0L781.0 514.5L782.0 513.5L783.0 508.5L784.0 499.0L785.0 489.5L786.0 479.5L787.0 470.5L788.0 460.0L789.0 450.5L790.0 444.5L791.0 440.0L792.0 435.0L793.0 430.0L794.0 426.0L795.0 424.0L796.0 420.0L797.0 417.5L798.0 416.0L799.0 415.0L800.0 414.0L801.0 420.5L802.0 426.5L803.0 437.0L804.0 447.0L805.0 457.5L806.0 464.5L807.0 467.5L808.0 470.5L809.0 472.0L810.0 475.0L811.0 478.0L812.0 480.5L813.0 482.5L814.0 484.5L815.0 486.5L816.0 489.0L817.0 490.5L818.0 492.0L819.0 493.5L820.0 494.0L821.0 496.5L822.0 497.0L823.0 499.0L824.0 499.5L825.0 500.0L826.0 502.0L827.0 502.0L828.0 503.5L829.0 505.5L830.0 506.5L831.0 506.5L832.0 507.0L833.0 507.5L834.0 508.5L835.0 509.0L836.0 510.5L837.0 512.0L838.0 513.5L839.0 513.5L840.0 513.5L841.0 513.0L842.0 511.0L843.0 510.5L844.0 504.5L845.0 496.0L846.0 486.0L847.0 477.0L848.0 467.0L849.0 457.0L850.0 447.0L851.0 441.0L852.0 436.0L853.0 431.5L854.0 426.5L855.0 422.5L856.0 419.5L857.0 416.0L858.0 413.5L859.0 412.0L860.0 411.5L861.0 410.5L862.0 417.0L863.0 424.0L864.0 434.0L865.0 444.5L866.0 455.5L867.0 461.5L868.0 465.5L869.0 467.5L870.0 470.5L871.0 473.0L872.0 475.5L873.0 478.5L874.0 480.5L875.0 483.0L876.0 485.5L877.0 487.5L878.0 489.0L879.0 490.5L880.0 492.5L881.0 493.5L882.0 496.0L883.0 496.0L884.0 498.0L885.0 498.5L886.0 501.0L887.0 501.0L888.0 501.5L889.0 503.0L890.0 504.0L891.0 506.0L892.0 506.5L893.0 506.5L894.0 507.0L895.0 508.5L896.0 509.5L897.0 511.5L898.0 513.0L899.0 512.5L900.0 512.5L901.0 512.5L902.0 511.5L903.0 511.0L904.0 509.5L905.0 500.5L906.0 492.0L907.0 482.5L908.0 472.5L909.0 463.0L910.0 454.0L911.0 445.5L912.0 441.5L913.0 436.5L914.0 432.0L915.0 427.0L916.0 424.0L917.0 421.0L918.0 418.5L919.0 416.5L920.0 415.0L921.0 414.0L922.0 417.5L923.0 422.5L924.0 432.0L925.0 442.0L926.0 452.5L927.0 462.5L928.0 465.0L929.0 468.0L930.0 481.0L931.0 483.0L932.0 486.0L933.0 489.0L934.0 491.0L935.0 493.0L936.0 495.0L937.0 496.5L938.0 498.0L939.0 499.5L940.0 501.5L941.0 503.0L942.0 504.5L943.0 506.0L944.0 507.5L945.0 508.0L946.0 508.5L947.0 510.5L948.0 512.0"/>
<path stroke="#ffff00" d="M949.5 492.5V472.0L949.5 472.0L950.5 461.5L951.5 452.5L952.5 444.5L953.5 438.5L954.5 434.5L955.5 428.5L956.5 425.0L957.5 421.0L958.5 418.5L959.5 415.0L960.5 413.5L961.5 412.0L962.5 411.0L963.5 414.0L964.5 420.0L965.5 429.5L966.5 441.0L967.5 452.5L968.5 462.5L969.5 466.0L970.5 469.5L971.5 472.5L972.5 475.0L973.5 478.5L974.5 481.5L975.5 483.5L976.5 485.5L977.5 489.0L978.5 490.5L979.5 491.5L980.5 493.5L981.5 495.5L982.5 497.0L983.5 498.5L984.5 500.0L985.5 502.0L986.5 503.0L987.5 504.5L988.5 505.5L989.5 506.0L990.5 507.5L991.5 508.5L992.5 509.0L993.5 510.0L994.5 510.5L995.5 511.5L996.5 512.5L997.5 513.5L998.5 515.0L999.5 516.5L1000.5 517.0L1001.5 517.5L1002.5 517.0L1003.5 515.5L1004.5 515.5L1005.5 513.5L1006.5 505.0L1007.5 495.5L1008.5 485.0L1009.5 475.0L1010.5 466.0L1011.5 455.5L1012.5 447.0L1013.5 442.5L1014.5 436.5L1015.5 431.5L1016.5 428.0L1017.5 424.5L1018.5 422.0L1019.5 418.5L1020.5 415.5L1021.5 415.5L1022.5 414.0L1023.5 417.5L1024.5 422.5L1025.5 432.0L1026.5 442.5L1027.5 452.0L1028.5 462.0L1029.5 466.0L1030.5 468.0L1031.5 471.0L1032.5 474.5L1033.5 477.0L1034.5 480.0L1035.5 482.0L1036.5 485.0L1037.5 487.0L1038.5 488.5L1039.5 491.0L1040.5 492.0L1041.5 493.0L1042.5 496.0L1043.5 496.5L1044.5 498.0L1045.5 499.0L1046.5 500.5L1047.5 501.0L1048.5 502.0L1049.5 503.5L1050.5 504.0L1051.5 505.5L1052.5 507.0L1053.5 507.5L1054.5 507.5L1055.5 509.0L1056.5 509.0L1057.5 510.0L1058.5 512.0L1059.5 513.5L1060.5 513.0L1061.5 513.5L1062.5 512.5L1063.5 512.0L1064.5 510.5L1065.5 505.5L1066.5 495.5L1067.5 486.5L1068.5 476.5L1069.5 466.5L1070.5 456.5L1071.5 446.0L1072.5 440.5L1073.5 435.5L1074.5 430.5L1075.5 425.0L1076.5 422.0L1077.5 419.0L1078.5 416.0L1079.5 412.5L1080.5 411.0L1081.5 410.5L1082.5 410.5L1083.5 415.5L1084.5 423.0L1085.5 433.5L1086.5 444.5L1087.5 454.0L1088.5 461.5L1089.5 464.5L1090.5 467.5L1091.5 469.5L1092.5 473.0L1093.5 475.5L1094.5 478.5L1095.5 480.5L1096.5 482.5L1097.5 485.5L1098.5 487.0L1099.5 488.0L1100.5 490.0L1101.5 491.5L1102.5 494.0L1103.5 494.5L1104.5 495.5L1105.5 497.5L1106.5 498.5L1107.5 499.5L1108.5 501.0L1109.5 501.5L1110.5 503.0L1111.5 503.5L1112.5 505.0L1113.5 505.0L1114.5 506.0L1115.5 507.0L1116.5 508.5L1117.5 508.0L1118.5 511.0L1119.5 511.5L1120.5 512.0L1121.5 512.5L1122.5 512.0L1123.5 511.0L1124.5 510.0L1125.5 509.0L1126.5 500.0L1127.5 491.5L1128.5 482.5L1129.5 472.0L1130.5 462.5L1131.5 453.0L1132.5 445.5L1133.5 440.0L1134.5 436.0L1135.5 431.5L1136.5 426.5L1137.5 423.5L1138.5 420.5L1139.5 418.0L1140.5 416.0L1141.5 414.0L1142.5 414.0L1143.5 417.5L1144.5 423.0L1145.5 433.5L1146.5 444.5L1147.5 456.0L1148.5 467.5L1149.5 470.5L1150.5 474.0L1151.5 477.5L1152.5 480.0L1153.5 483.0L1154.5 486.0L1155.5 489.0L1156.5 491.5L1157.5 494.5L1158.5 496.0L1159.5 498.0L1160.5 499.5L1161.5 502.0L1162.5 504.0L1163.5 505.0L1164.5 507.0L1165.5 507.5L1166.5 509.0L1167.5 510.0L1168.5 511.5L1169.5 512.5L1170.5 514.0L1171.5 515.0L1172.5 515.5L1173.5 516.5L1174.5 518.0L1175.5 519.0L1176.5 519.5L1177.5 520.5L1178.5 522.5L1179.5 524.0L1180.5 524.0L1181.5 524.0L1182.5 523.0L1183.5 523.0L1184.5 522.0L1185.5 520.0L1186.5 509.0L1187.5 498.0L1188.5 486.5L1189.5 475.5L1190.5 464.5L1191.5 452.5L1192.5 443.0L1193.5 437.0L1194.5 430.5L1195.5 424.5L1196.5 420.0L1197.5 415.5L1198.5 412.5L1199.5 409.5L1200.5 406.5L1201.5 404.5L1202.5 403.0L1203.5 407.5L1204.5 413.0L1205.5 423.5L1206.5 435.0L1207.5 446.0L1208.5 456.5L1209.5 460.0L1210.5 463.5L1211.5 466.5L1212.5 470.0L1213.5 473.0L1214.5 477.0L1215.5 478.5L1216.5 482.0L1217.5 484.0L1218.5 486.0L1219.5 487.5L1220.5 490.0L1221.5 491.0L1222.5 493.0L1223.5 494.0L1224.5 495.5L1225.5 497.5L1226.5 497.5L1227.5 499.5L1228.5 500.5L1229.5 501.5L1230.5 503.0L1231.5 504.5L1232.5 505.0L1233.5 506.5L1234.5 507.0L1235.5 508.0L1236.5 508.0L1237.5 510.5L1238.5 512.5L1239.5 512.5L1240.5 512.0L1241.5 511.5L1242.5 510.5L1243.5 509.5L1244.5 508.5L1245.5 499.5L1246.5 490.5L1247.5 480.5L1248.5 471.5L1249.5 461.0L1250.5 452.5L1251.5 443.5L1252.5 438.0L1253.5 433.0L1254.5 428.0L1255.5 424.0L1256.5 421.5L1257.5 418.0L1258.5 414.5L1259.5 412.5L1260.5 411.5L1261.5 410.5L1262.5 414.5L1263.5 419.5L1264.5 429.5L1265.5 440.0L1266.5 451.0L1267.5 462.0L1268.5 464.5L1269.5 467.5L1270.5 471.0L1271.5 474.0L1272.5 476.5L1273.5 479.0L1274.5 481.5L1275.5 483.5L1276.5 486.0L1277.5 488.5L1278.5 490.5L1279.5 491.5L1280.5 493.5L1281.5 495.5L1282.5 496.5L1283.5 498.0L1284.5 499.0L1285.5 500.0L1286.5 501.5L1287.5 503.0L1288.5 504.0L1289.5 505.0L1290.5 506.0L1291.5 507.0L1292.5 508.0L1293.5 508.5L1294.5 509.0L1295.5 510.5L1296.5 510.5L1297.5 511.5L1298.5 513.0L1299.5 515.5L1300.5 515.5L1301.5 516.0L1302.5 515.0L1303.5 514.5L1304.5 513.5L1305.5 511.5L1306.5 502.0L1307.5 494.0L1308.5 484.0L1309.5 475.0L1310.5 465.5L1311.5 455.5L1312.5 447.5L1313.5 442.0L1314.5 437.5L1315.5 433.0L1316.5 428.5L1317.5 425.0L1318.5 422.5L1319.5 419.5L1320.5 417.0L1321.5 416.0L1322.5 415.0L1323.5 418.5L1324.5 424.0L1325.5 433.0L1326.5 442.5L1327.5 453.5L1328.5 463.0L1329.5 465.5L1330.5 469.0L1331.5 471.5L1332.5 474.0L1333.5 477.5L1334.5 479.5L1335.5 482.5L1336.5 484.5L1337.5 486.5L1338.5 488.5L1339.5 490.0L1340.5 491.5L1341.5 493.0L1342.5 495.0L1343.5 496.0L1344.5 497.5L1345.5 498.5L1346.5 500.0L1347.5 501.0L1348.5 501.5L1349.5 503.0L1350.5 503.5L1351.5 505.5L1352.5 506.0L1353.5 507.5L1354.5 507.0L1355.5 508.0L1356.5 509.5L1357.5 509.5L1358.5 511.0L1359.5 513.0L1360.5 513.5L1361.5 513.5L1362.5 513.0L1363.5 511.5L1364.5 511.5L1365.5 510.0L1366.5 500.0L1367.5 491.0L1368.5 481.0L1369.5 472.0L1370.5 462.0L1371.5 452.5L1372.5 443.0L1373.5 438.0L1374.5 433.5L1375.5 428.0L1376.5 424.0L1377.5 420.5L1378.5 417.0L1379.5 414.0L1380.5 412.5L1381.5 410.5L1382.5 410.5L1383.5 412.5L1384.5 419.0L1385.5 428.0L1386.5 439.5L1387.5 450.0L1388.5 460.5L1389.5 462.5L1390.5 465.5L1391.5 469.5L1392.5 472.0L1393.5 474.5L1394.5 477.5L1395.5 480.5L1396.5 482.0L1397.5 485.0L1398.5 486.0L1399.5 488.0L1400.5 490.0L1401.5 491.5L1402.5 493.5L1403.5 494.5L1404.5 496.0L1405.5 497.0L1406.5 498.5L1407.5 499.5L1408.5 500.5L1409.5 501.0L1410.5 503.0L1411.5 503.5L1412.5 504.0L1413.5 506.0L1414.5 506.0L1415.5 506.5L1416.5 508.0L1417.5 508.5L1418.5 510.5L1419.5 512.0L1420.5 512.5L1421.5 512.5L1422.5 511.5L1423.5 511.5L1424.5 510.0L1425.5 509.0L1426.5 500.0L1427.5 491.0L1428.5 481.5L1429.5 472.5L1430.5 463.0L1431.5 454.0L1432.5 445.5L1433.5 441.5L1434.5 437.0L1435.5 432.0L1436.5 427.5L1437.5 424.0L1438.5 421.5L1439.5 418.5L1440.5 416.0L1441.5 416.0L1442.5 414.5L1443.5 417.5L1444.5 424.5L1445.5 434.0L1446.5 446.0L1447.5 456.5L1448.5 468.0L1449.5 471.0L1450.5 475.0L1451.5 477.5L1452.5 481.0L1453.5 483.5L1454.5 486.5L1455.5 490.0L1456.5 492.0L1457.5 494.5L1458.5 496.0L1459.5 499.0L1460.5 500.0L1461.5 502.0L1462.5 504.0L1463.5 504.5L1464.5 506.5L1465.5 507.5L1466.5 509.0L1467.5 510.5L1468.5 511.0L1469.5 512.5L1470.5 513.5L1471.5 514.5L1472.5 516.5L1473.5 516.0L1474.5 517.5L1475.5 519.0L1476.5 519.0L1477.5 520.0L1478.5 521.5L1479.5 524.0L1480.5 524.5L1481.5 524.0L1482.5 524.0L1483.5 523.5L1484.5 522.0L1485.5 519.5L1486.5 509.5L1487.5 498.0L1488.5 486.5L1489.5 475.0L1490.5 463.5L1491.5 452.0L1492.5 442.0L1493.5 436.5L1494.5 430.5L1495.5 425.0L1496.5 420.0L1497.5 416.0L1498.5 413.0L1499.5 408.0L1500.5 405.0L1501.5 404.5L1502.5 403.5L1503.5 406.5L1504.5 413.0L1505.5 423.0L1506.5 434.0L1507.5 445.0L1508.5 456.5L1509.5 460.0L1510.5 462.5L1511.5 466.5L1512.5 470.0L1513.5 474.0L1514.5 477.0L1515.5 479.0L1516.5 482.5L1517.5 484.5L1518.5 486.5L1519.5 488.0L1520.5 489.5L1521.5 492.0L1522.5 493.0L1523.5 494.5L1524.5 496.5L1525.5 498.0L1526.5 499.0L1527.5 500.5L1528.5 501.5L1529.5 502.5L1530.5 503.0L1531.5 504.0L1532.5 506.0L1533.5 506.5L1534.5 507.0L1535.5 507.5L1536.5 508.5L1537.5 511.0L1538.5 511.5L1539.5 512.0L1540.5 512.0L1541.5 512.0L1542.5 511.5L1543.5 509.5L1544.5 504.0L1545.5 495.0L1546.5 485.5L1547.5 476.5L1548.5 466.0L1549.5 457.0L1550.5 447.0L1551.5 441.0L1552.5 436.0L1553.5 431.5L1554.5 426.5L1555.5 422.5L1556.5 420.0L1557.5 417.0L1558.5 413.0L1559.5 412.5L1560.5 411.0L1561.5 411.0L1562.5 417.0L1563.5 423.5L1564.5 435.0L1565.5 446.5L1566.5 456.5L1567.5 463.0L1568.5 466.0L1569.5 470.0L1570.5 472.5L1571.5 475.0L1572.5 478.5L1573.5 480.5L1574.5 483.5L1575.5 485.5L1576.5 487.5L1577.5 489.5L1578.5 491.5L1579.5 493.0L1580.5 494.0L1581.5 496.0L1582.5 497.5L1583.5 498.0L1584.5 499.5L1585.5 501.5L1586.5 502.0L1587.5 504.0L1588.5 504.5L1589.5 506.0L1590.5 507.0L1591.5 507.5L1592.5 508.0L1593.5 509.0L1594.5 509.5L1595.5 511.0L1596.5 511.5L1597.5 513.0L1598.5 514.5L1599.5 515.5L1600.5 516.0L1601.5 515.5L1602.5 514.5L1603.5 513.0L1604.5 511.0L1605.5 503.0L1606.5 494.0L1607.5 484.0L1608.5 474.5L1609.5 465.5L1610.5 455.0L1611.5 447.5L1612.5 443.0L1613.5 437.5L1614.5 433.5L1615.5 428.0L1616.5 425.0L1617.5 422.0L1618.5 419.0L1619.5 417.0L1620.5 416.0L1621.5 415.5L1622.5 417.5L1623.5 423.0L1624.5 432.5L1625.5 443.0L1626.5 452.5L1627.5 463.0L1628.5 466.5L1629.5 468.5L1630.5 471.5L1631.5 475.0L1632.5 477.5L1633.5 480.0L1634.5 482.0L1635.5 484.0L1636.5 486.5L1637.5 488.5L1638.5 490.0L1639.5 491.5L1640.5 494.0L1641.5 495.5L1642.5 496.5L1643.5 497.5L1644.5 499.0L1645.5 500.5L1646.5 500.5L1647.5 501.5L1648.5 503.5L1649.5 504.0L1650.5 504.5L1651.5 506.0L1652.5 507.0L1653.5 507.5L1654.5 508.0L1655.5 509.5L1656.5 509.5L1657.5 512.0"/>
</g>
<path d="M537.0 608.6L557.5 608.6L559.0 609.4L564.5 609.4L566.0 608.0L571.5 608.0L573.0 609.0L836.0 609.0L837.5 607.8L851.0 607.8L853.0 609.3L866.0 609.3L867.5 607.9L871.0 607.9L872.5 609.1L948.0 609.1L950.0 608.0L957.0 608.0L958.5 607.0L983.0 607.0L984.5 608.1L1138.0 608.1L1139.5 609.0L1255.0 609.0L1256.5 607.7L1264.0 607.7L1265.5 608.6L1355.0 608.6L1356.5 607.7L1377.0 607.7L1379.0 609.2L1385.0 609.2L1386.5 607.9L1391.0 607.9L1393.0 608.9L1652.0 608.9L1655.0 607.4L1658.0 607.4" fill="none" stroke="#cc08cc" stroke-width="2"/>
<g font-family="Liberation Sans, Arial, sans-serif" font-size="20.5" text-anchor="end">
<text x="1597.6" y="213.4" fill="#ffff00">LCXx</text><text x="1646.5" y="213.4" fill="#ff0000">AO</text>
<text x="1597.5" y="250.1" fill="#ffff00">200</text><text x="1646.8" y="250.1" fill="#ff0000">200</text>
<text x="1597.5" y="283.8" fill="#ffff00">180</text><text x="1646.8" y="283.8" fill="#ff0000">180</text>
<text x="1597.5" y="317.7" fill="#ffff00">160</text><text x="1646.8" y="317.7" fill="#ff0000">160</text>
<text x="1597.5" y="351.8" fill="#ffff00">140</text><text x="1646.8" y="351.8" fill="#ff0000">140</text>
<text x="1597.5" y="385.8" fill="#ffff00">120</text><text x="1646.8" y="385.8" fill="#ff0000">120</text>
<text x="1597.5" y="420.0" fill="#ffff00">100</text><text x="1646.8" y="420.0" fill="#ff0000">100</text>
<text x="1597.5" y="453.9" fill="#ffff00">80</text><text x="1646.8" y="453.9" fill="#ff0000">80</text>
<text x="1597.5" y="487.6" fill="#ffff00">60</text><text x="1646.8" y="487.6" fill="#ff0000">60</text>
<text x="1597.5" y="521.7" fill="#ffff00">40</text><text x="1646.8" y="521.7" fill="#ff0000">40</text>
<text x="1597.5" y="556.7" fill="#ffff00">20</text><text x="1646.8" y="556.7" fill="#ff0000">20</text>
<text x="1597.5" y="591.4" fill="#ffff00">0</text><text x="1646.8" y="591.4" fill="#ff0000">0</text>
</g>
<g fill="#ff00ff" font-family="Liberation Sans, Arial, sans-serif"><text x="543" y="694.3" font-size="21.5">P<tspan font-size="11.5" dy="3.5">d</tspan><tspan dy="-3.5">/P</tspan><tspan font-size="11.5" dy="3.5">a</tspan></text><text x="603.5" y="694.3" font-size="21.5">1</text></g>
</svg>
<div style="left:535.5px;top:66px;width:1123.5px;height:663px;border:1px solid #66709a;border-left:1.5px solid #66709a;border-right:1.4px solid #66709a;box-sizing:border-box"></div>
<div style="left:536px;top:744px;width:1123px;height:326px;background:#000"></div>
<div style="left:537px;top:745px;width:1121px;height:324px;background:#21213b"></div>
<div style="left:544px;top:754.4px;width:268px;height:23.8px;background:#d0d7f0"></div>
<svg style="left:550px;top:757px" width="18" height="18" viewBox="0 0 18 18"><circle cx="6.8" cy="6.8" r="4.2" fill="none" stroke="#6c6cf0" stroke-width="2"/><path d="M10 10l5.2 5.4" stroke="#6c6cf0" stroke-width="2.6" stroke-linecap="round"/></svg>
<span style="left:578.7px;top:758.05px;font-size:14.2px;line-height:15.86px;color:#1c1c2c">Ctrl + Q</span>
<div style="left:537px;top:784px;width:1121px;height:2.2px;background:#6a76a2"></div>
<div style="left:537px;top:786px;width:275px;height:29px;background:#3a3a5c"></div>
<svg style="left:548px;top:796px" width="14" height="10"><path d="M0.8 1h11.6l-5.8 7.6z" fill="#fff"/></svg>
<span style="left:571.2px;top:792.16px;font-size:16.4px;line-height:18.32px;color:#f4f4f8">Pre Cath Data</span>
<svg style="left:789px;top:793px" width="12" height="16"><path d="M9.2 2.2L2.6 7.6l6.6 5.4" fill="none" stroke="#fff" stroke-width="2"/></svg>
<div style="left:538.3px;top:814.6px;width:273.9px;height:253.6px;background:#000"></div>
<div style="left:539.5px;top:816px;width:271.7px;height:251.5px;background:#21213b"></div>
<div style="left:812.2px;top:786.2px;width:2.7px;height:282.8px;background:#0d0d1b"></div>
<div style="left:539.5px;top:851px;width:253.5px;height:1px;background:#000"></div>
<span style="left:551.2px;top:824.66px;font-size:16.4px;line-height:18.32px;color:#f4f4f8">Performing Physicians</span>
<svg style="left:778px;top:827.5px" width="9" height="14"><path d="M0.8 0.6v12.8l6.8-6.4z" fill="#fff"/></svg>
<div style="left:539.5px;top:886px;width:253.5px;height:1px;background:#000"></div>
<span style="left:551.2px;top:859.66px;font-size:16.4px;line-height:18.32px;color:#f4f4f8">Personnel</span>
<svg style="left:778px;top:862.5px" width="9" height="14"><path d="M0.8 0.6v12.8l6.8-6.4z" fill="#fff"/></svg>
<div style="left:539.5px;top:921px;width:253.5px;height:1px;background:#000"></div>
<span style="left:551.2px;top:894.66px;font-size:16.4px;line-height:18.32px;color:#f4f4f8">Case Times</span>
<svg style="left:778px;top:897.5px" width="9" height="14"><path d="M0.8 0.6v12.8l6.8-6.4z" fill="#fff"/></svg>
<div style="left:539.5px;top:956px;width:253.5px;height:1px;background:#000"></div>
<span style="left:551.2px;top:929.66px;font-size:16.4px;line-height:18.32px;color:#f4f4f8">Patient/Procedure Status</span>
<div style="left:539.5px;top:991px;width:253.5px;height:1px;background:#000"></div>
<span style="left:551.2px;top:964.66px;font-size:16.4px;line-height:18.32px;color:#f4f4f8">Procedure Checklist</span>
<div style="left:539.5px;top:1026px;width:253.5px;height:1px;background:#000"></div>
<span style="left:551.2px;top:999.66px;font-size:16.4px;line-height:18.32px;color:#f4f4f8">LOC Score Pre</span>
<svg style="left:778px;top:1002.5px" width="9" height="14"><path d="M0.8 0.6v12.8l6.8-6.4z" fill="#fff"/></svg>
<div style="left:539.5px;top:1061px;width:253.5px;height:1px;background:#000"></div>
<span style="left:551.2px;top:1034.66px;font-size:16.4px;line-height:18.32px;color:#f4f4f8">Allergies</span>
<svg style="left:794px;top:820px" width="16" height="9"><path d="M1.2 8.2h12.6L7.5 0.4z" fill="#6c78a0"/></svg>
<div style="left:795.3px;top:833px;width:12.6px;height:153.3px;background:#6f7ba2;border:1px solid #7a86ae;box-sizing:border-box"></div>
<svg style="left:794px;top:1054px" width="16" height="9"><path d="M1.2 0.8h12.6L7.5 8.3z" fill="#6a74a0"/></svg>
<div style="left:845px;top:759px;width:48px;height:24px;background:#6a769f"></div>
<span style="left:847.5px;top:763.53px;font-size:14px;line-height:15.64px;color:#fff">Events</span>
<div style="left:895px;top:759px;width:52px;height:24px;background:#3a3a5c"></div>
<span style="left:897.5px;top:763.53px;font-size:14px;line-height:15.64px;color:#fff">Results</span>
<div style="left:949px;top:759px;width:24px;height:24px;background:#3a3a5c"></div>
<div style="left:959px;top:761.3px;width:4px;height:14.7px;background:#f2a20c"></div>
<div style="left:959px;top:777.5px;width:4px;height:3.2px;background:#f2a20c"></div>
<span style="left:1254.5px;top:759.47px;font-size:14.4px;line-height:16.08px;color:#f4f4f8">Event:</span>
<div style="left:1300px;top:753px;width:219px;height:26.5px;background:#3a3a5c"></div>
<span style="left:1306px;top:759.33px;font-size:14px;line-height:15.64px;color:#f4f4f8">--</span>
<svg style="left:1502px;top:763px" width="13" height="8"><path d="M0.5 0.5h12l-6 6.5z" fill="#fff"/></svg>
<svg style="left:1534px;top:756px" width="30" height="21" viewBox="0 0 30 21"><rect x="8.7" y="1.5" width="12.1" height="6.1" fill="#ffffff"/><path d="M1.0 16.4v-5.0a2 2 0 0 1 2-2h23.5a2 2 0 0 1 2 2v5.0z" fill="#ffffff"/><path d="M8.2 14.1h13.2l1.6 4.9h-16.5z" fill="#ffffff" stroke="#21213b" stroke-width="1.600"/></svg>
<div style="left:1588px;top:758px;width:20.5px;height:17px;border:1.5px solid #fff;box-sizing:border-box"></div>
<div style="left:1588px;top:770.5px;width:20.5px;height:4.5px;background:#fff"></div>
<div style="left:1612.2px;top:758px;width:20.5px;height:17px;border:1.5px solid #fff;box-sizing:border-box"></div>
<div style="left:1612.2px;top:766.5px;width:20.5px;height:8.5px;background:#fff"></div>
<div style="left:1636.4px;top:758px;width:20.5px;height:17px;border:1.5px solid #fff;box-sizing:border-box"></div>
<div style="left:1636.4px;top:762px;width:20.5px;height:13px;background:#fff"></div>
<div style="left:814.9px;top:786.2px;width:840.7px;height:189px;background:#000"></div>
<div style="left:814.9px;top:787px;width:26.9px;height:32px;background:#3a3a5c"></div>
<div style="left:843px;top:787px;width:670.6px;height:32px;background:#3a3a5c"></div>
<div style="left:1514.6px;top:787px;width:141px;height:32px;background:#3a3a5c"></div>
<span style="left:856.2px;top:796.54px;font-size:16.2px;line-height:18.10px;color:#f4f4f8">Summary</span>
<svg style="left:1516px;top:802px" width="10" height="7"><path d="M0.6 0.8h8l-4 4.6z" fill="#fff"/></svg>
<span style="left:1527.5px;top:796.54px;font-size:16.2px;line-height:18.10px;color:#f4f4f8">Time</span>
<div style="left:814.9px;top:820px;width:26.9px;height:30px;background:#6c789f"></div>
<div style="left:843px;top:820px;width:670.6px;height:30px;background:#6c789f;overflow:hidden"><span style="left:11.3px;top:5.89px;font-size:16.48px;line-height:18.41px;color:#f4f4f8">Resting Pd/Pa | Resting Pd/Pa Value : 0.81&nbsp; | P1:Pa : [ AO : 1 ] [ mmHg ] | P2:Pd : [ LCX...</span></div>
<div style="left:1514.6px;top:820px;width:141px;height:30px;background:#6c789f"></div>
<span style="left:1530px;top:825.87px;font-size:16.5px;line-height:18.43px;color:#f4f4f8">9:42:07 PM*</span>
<div style="left:814.9px;top:851px;width:26.9px;height:30px;background:#21213b"></div>
<div style="left:843px;top:851px;width:670.6px;height:30px;background:#21213b;overflow:hidden"><span style="left:11.3px;top:5.89px;font-size:16.48px;line-height:18.41px;color:#f4f4f8">FFR | FFR : 0.8&nbsp; | P1:Pa : [ AO : 1 ] [ mmHg ] | P2:Pd : [ LCX : 0 ] [ mmHg ] | (Pa-Pd) : 1...</span></div>
<div style="left:1514.6px;top:851px;width:141px;height:30px;background:#21213b"></div>
<span style="left:1530px;top:856.87px;font-size:16.5px;line-height:18.43px;color:#f4f4f8">9:41:24 PM</span>
<div style="left:814.9px;top:882px;width:26.9px;height:30px;background:#21213b"></div>
<div style="left:843px;top:882px;width:670.6px;height:30px;background:#21213b;overflow:hidden"><span style="left:11.3px;top:5.89px;font-size:16.48px;line-height:18.41px;color:#f4f4f8">Vital Sign Alarm Settings| Alarms/Type : Active/Adult&nbsp;&nbsp; | HR : On:On:45:120 [ bpm ]| SpO...</span></div>
<div style="left:1514.6px;top:882px;width:141px;height:30px;background:#21213b"></div>
<span style="left:1530px;top:887.87px;font-size:16.5px;line-height:18.43px;color:#f4f4f8">9:40:06 PM</span>
<div style="left:814.9px;top:913px;width:26.9px;height:30px;background:#21213b"></div>
<div style="left:843px;top:913px;width:670.6px;height:30px;background:#21213b;overflow:hidden"><span style="left:11.3px;top:5.89px;font-size:16.48px;line-height:18.41px;color:#f4f4f8">Condition Changed</span></div>
<div style="left:1514.6px;top:913px;width:141px;height:30px;background:#21213b"></div>
<span style="left:1530px;top:918.87px;font-size:16.5px;line-height:18.43px;color:#f4f4f8">9:40:05 PM</span>
<div style="left:814.9px;top:944px;width:26.9px;height:30px;background:#21213b"></div>
<div style="left:843px;top:944px;width:670.6px;height:30px;background:#21213b;overflow:hidden"><span style="left:11.3px;top:5.89px;font-size:16.48px;line-height:18.41px;color:#f4f4f8">New Condition| Name : Rest</span></div>
<div style="left:1514.6px;top:944px;width:141px;height:30px;background:#21213b"></div>
<span style="left:1530px;top:949.87px;font-size:16.5px;line-height:18.43px;color:#f4f4f8">9:40:05 PM</span>
</div>
</body></html>
